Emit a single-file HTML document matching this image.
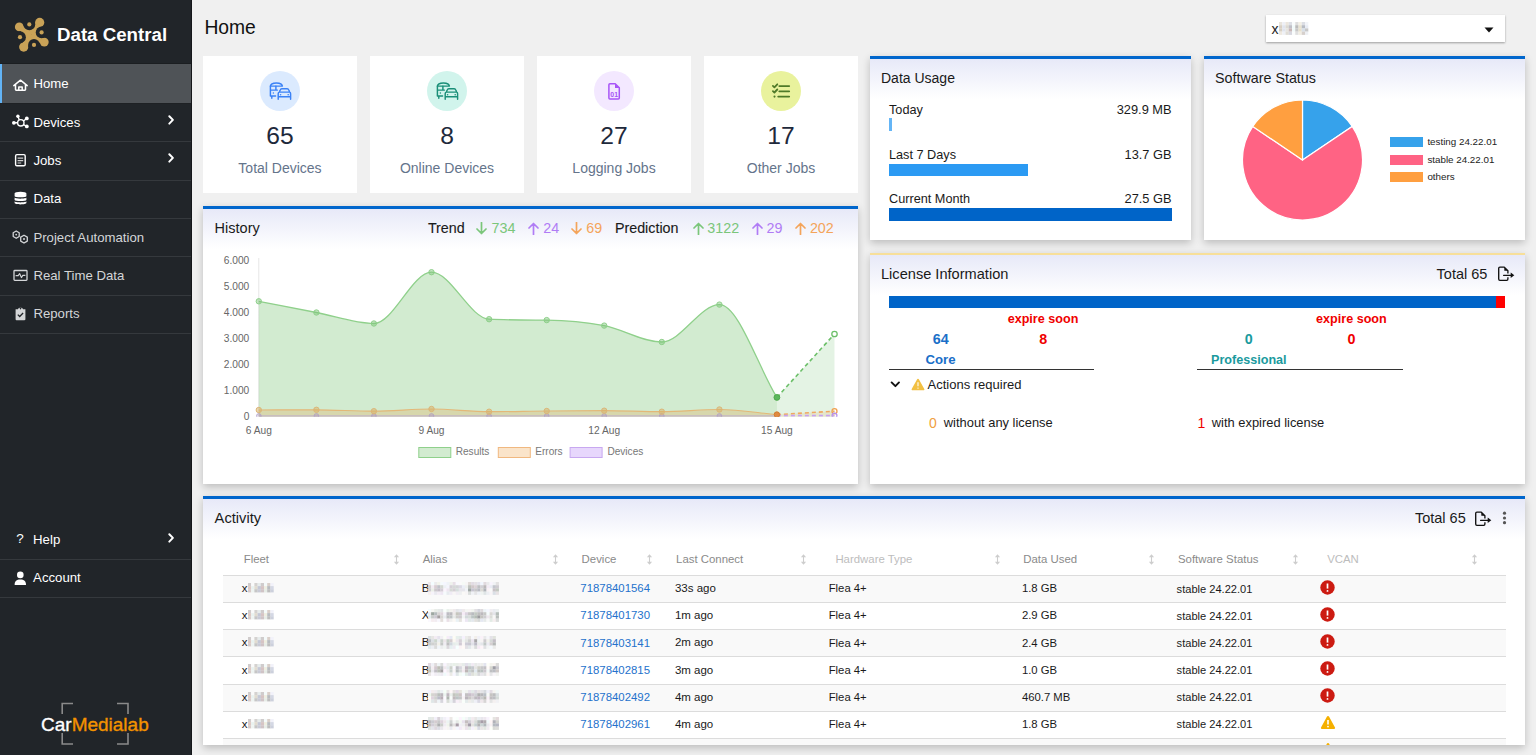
<!DOCTYPE html><html><head><meta charset="utf-8"><title>Data Central</title><style>
*{box-sizing:border-box;margin:0;padding:0}
html,body{width:1536px;height:755px;overflow:hidden}
body{background:#f0f0f0;font-family:"Liberation Sans",sans-serif;position:relative;color:#212121}
.a{position:absolute;white-space:nowrap}
#sb{position:absolute;left:0;top:0;width:192px;height:755px;background:#212529;border-right:1px solid #15171a}
.it{position:absolute;left:0;width:191px;height:38.4px;border-bottom:1px solid #34383c;color:#fff;font-size:14px}
.it .t{position:absolute;left:33px;top:11px}
.it svg{position:absolute}
.card{position:absolute;background:#fff;box-shadow:0 3px 8px rgba(0,0,0,.22)}
.card .hd{position:absolute;left:0;right:0;top:0;height:42px;background:linear-gradient(#e7e9f8,#fff)}
.card .bt{position:absolute;left:0;right:0;top:0;height:3px;background:#0066cc}
.stat{position:absolute;top:56px;width:154px;height:137px;background:#fff}
.stat .c{position:absolute;left:57px;top:15px;width:40px;height:40px;border-radius:50%}
.stat .n{position:absolute;left:0;width:154px;text-align:center;top:126px;font-size:24px;color:#1e293b;line-height:1}
.stat .l{position:absolute;left:0;width:154px;text-align:center;top:161px;font-size:14px;color:#64748b;line-height:1}
</style></head><body>
<div id="sb"></div>
<svg class="a" style="left:12px;top:16px" width="40" height="40" viewBox="12 16 40 40"><defs><mask id="lm"><rect x="0" y="0" width="60" height="60" fill="#fff"/><circle cx="29.3" cy="24.4" r="5.9" fill="#000"/><circle cx="41.6" cy="32.4" r="5.9" fill="#000"/><circle cx="20.0" cy="37.2" r="5.9" fill="#000"/><circle cx="34.0" cy="44.9" r="5.9" fill="#000"/></mask></defs><g fill="#c9a257"><g mask="url(#lm)"><path d="M34.86 29.00 L20.36 25.21 L18.24 28.59 L27.94 40.00 Z"/><circle cx="19.3" cy="26.9" r="4.4"/><path d="M36.76 38.18 L41.35 23.53 L38.05 21.27 L26.04 30.82 Z"/><circle cx="39.7" cy="22.4" r="4.6"/><path d="M25.85 31.11 L21.99 46.06 L25.41 48.14 L36.95 37.89 Z"/><circle cx="23.7" cy="47.1" r="4.6"/><path d="M28.10 40.10 L43.28 43.82 L45.32 40.38 L34.70 28.90 Z"/><circle cx="44.3" cy="42.1" r="4.4"/></g><circle cx="29.3" cy="24.4" r="2.1"/><circle cx="41.6" cy="32.4" r="2.1"/><circle cx="20.0" cy="37.2" r="2.1"/><circle cx="34.0" cy="44.9" r="2.1"/></g></svg>
<div class="a" style="top:25.87px;font-size:18.7px;line-height:18.7px;color:#fff;font-weight:bold;left:57.00px;">Data Central</div>
<div class="a" style="left:0;top:63px;width:191px;height:1px;background:#1b1e21"></div>
<div class="a" style="left:0;top:64px;width:191px;height:38.5px;background:#4f5357"></div>
<div class="a" style="left:0;top:103.10px;width:191px;height:1px;background:#1e2124"></div>
<div class="a" style="top:77.23px;font-size:13.2px;line-height:13.2px;color:#fff;left:33.40px;">Home</div>
<div class="a" style="left:0;top:141.42px;width:191px;height:1px;background:#35393d"></div>
<div class="a" style="top:115.55px;font-size:13.2px;line-height:13.2px;color:#fff;left:33.40px;">Devices</div>
<div class="a" style="left:0;top:179.74px;width:191px;height:1px;background:#35393d"></div>
<div class="a" style="top:153.87px;font-size:13.2px;line-height:13.2px;color:#fff;left:33.40px;">Jobs</div>
<div class="a" style="left:0;top:218.06px;width:191px;height:1px;background:#35393d"></div>
<div class="a" style="top:192.19px;font-size:13.2px;line-height:13.2px;color:#fff;left:33.40px;">Data</div>
<div class="a" style="left:0;top:256.38px;width:191px;height:1px;background:#35393d"></div>
<div class="a" style="top:230.51px;font-size:13.2px;line-height:13.2px;color:#d4d6d8;left:33.40px;">Project Automation</div>
<div class="a" style="left:0;top:294.70px;width:191px;height:1px;background:#35393d"></div>
<div class="a" style="top:268.83px;font-size:13.2px;line-height:13.2px;color:#d4d6d8;left:33.40px;">Real Time Data</div>
<div class="a" style="left:0;top:333.02px;width:191px;height:1px;background:#35393d"></div>
<div class="a" style="top:307.15px;font-size:13.2px;line-height:13.2px;color:#d4d6d8;left:33.40px;">Reports</div>
<div class="a" style="left:0;top:64px;width:2.4px;height:38.5px;background:#62b3f5"></div>
<svg class="a" style="left:166px;top:113.5px" width="10" height="12" viewBox="0 0 10 12"><path d="M3.3 2.2 L6.9 5.9 L3.3 9.6" stroke="#fff" stroke-width="2" fill="none" stroke-linecap="round" stroke-linejoin="round"/></svg>
<svg class="a" style="left:166px;top:152px" width="10" height="12" viewBox="0 0 10 12"><path d="M3.3 2.2 L6.9 5.9 L3.3 9.6" stroke="#fff" stroke-width="2" fill="none" stroke-linecap="round" stroke-linejoin="round"/></svg>
<svg class="a" style="left:166px;top:531.5px" width="10" height="12" viewBox="0 0 10 12"><path d="M3.3 2.2 L6.9 5.9 L3.3 9.6" stroke="#fff" stroke-width="2" fill="none" stroke-linecap="round" stroke-linejoin="round"/></svg>
<div class="a" style="left:0;top:558.8px;width:191px;height:1px;background:#35393d"></div>
<div class="a" style="left:0;top:596.9px;width:191px;height:1px;background:#35393d"></div>
<div class="a" style="top:532.37px;font-size:13.5px;line-height:13.5px;color:#fff;left:16.30px;">?</div>
<div class="a" style="top:532.83px;font-size:13.2px;line-height:13.2px;color:#fff;left:33.10px;">Help</div>
<div class="a" style="top:571.33px;font-size:13.2px;line-height:13.2px;color:#fff;left:33.10px;">Account</div>
<svg class="a" style="left:0;top:0" width="40" height="340" viewBox="0 0 40 340">
<path d="M13.8 85.6 L20.5 80.2 L27.2 85.6 M15.5 84.4 V89.6 C15.5 90 15.8 90.3 16.2 90.3 H24.8 C25.2 90.3 25.5 90 25.5 89.6 V84.4 M18.8 90.3 V87 H22.2 V90.3" stroke="#fff" stroke-width="1.5" fill="none" stroke-linejoin="round" stroke-linecap="round"/>
<g stroke="#fff" stroke-width="1.4" fill="none"><circle cx="20.8" cy="122.8" r="3.2"/><path d="M13.8 122.8 H17.6 M17.9 116.2 L19.3 120 M26.9 118.3 L23.5 121 M26.9 126.5 L23.5 124.6"/></g>
<g fill="#fff"><circle cx="13.9" cy="122.8" r="1.9"/><circle cx="17.9" cy="116.3" r="1.7"/><circle cx="26.8" cy="118.4" r="1.9"/><circle cx="26.8" cy="126.4" r="1.9"/></g>
<rect x="15.6" y="154.6" width="9.6" height="11.2" rx="1.3" stroke="#fff" stroke-width="1.4" fill="none"/>
<path d="M17.6 158.2 H23.2 M17.6 160.6 H23.2 M17.6 163 H21.2" stroke="#cfcfcf" stroke-width="1.2"/>
<g fill="#fff"><ellipse cx="20.5" cy="193.6" rx="5.9" ry="1.9"/><path d="M14.6 193.6 V196.3 C14.6 197.6 26.4 197.6 26.4 196.3 V193.6 C26.4 195 14.6 195 14.6 193.6Z"/><path d="M14.6 197.6 V200 C14.6 201.3 26.4 201.3 26.4 200 V197.6 C26.4 199 14.6 199 14.6 197.6Z"/><path d="M14.6 201.3 V203.1 C14.6 204.9 26.4 204.9 26.4 203.1 V201.3 C26.4 202.8 14.6 202.8 14.6 201.3Z"/></g>
<g stroke="#d4d6d8" stroke-width="1.3" fill="none" stroke-linejoin="round"><path d="M16.2 231 L19.2 232.8 V236.5 L16.2 238.3 L13.2 236.5 V232.8Z"/><path d="M24 235.2 L27.3 237.1 V241.1 L24 243 L20.7 241.1 V237.1Z"/></g>
<g fill="#d4d6d8"><circle cx="16.2" cy="234.6" r="0.9"/><circle cx="24" cy="239.1" r="1"/></g>
<rect x="14" y="270.5" width="13" height="9.8" rx="0.8" stroke="#d4d6d8" stroke-width="1.3" fill="none"/>
<path d="M15.6 275.6 H18.2 L19.6 273.6 L21.4 277.6 L22.8 275.4 H25.4" stroke="#d4d6d8" stroke-width="1.1" fill="none" stroke-linejoin="round"/>
<path d="M15.6 309.2 H18 C18 307.2 23 307.2 23 309.2 H25.4 V319.3 C25.4 319.8 25 320.2 24.5 320.2 H16.5 C16 320.2 15.6 319.8 15.6 319.3Z" fill="#d4d6d8"/>
<circle cx="20.5" cy="308.6" r="0.8" fill="#212529"/>
<path d="M17.8 314.6 L19.7 316.5 L23.1 313" stroke="#212529" stroke-width="1.3" fill="none"/>
</svg>
<svg class="a" style="left:14px;top:571px" width="13" height="15" viewBox="0 0 13 15"><circle cx="6.3" cy="3.9" r="3.3" fill="#fff"/><path d="M0.6 14 C0.6 10.3 2.6 8.6 6.3 8.6 C10 8.6 12 10.3 12 14Z" fill="#fff"/></svg>
<svg class="a" style="left:60px;top:702px" width="72" height="44" viewBox="0 0 72 44"><g stroke="#8a8a8a" stroke-width="1.6" fill="none"><path d="M2.2 12 V1.5 H13 M57 1.5 H68 V12 M2.2 31 V42 H13 M57 42 H68 V31"/></g></svg>
<div class="a" style="top:715.32px;font-size:19px;line-height:19px;color:#fff;left:41.00px;"><span style="color:#fff;-webkit-text-stroke:0.35px #fff">Car</span><span style="color:#f39200;-webkit-text-stroke:0.35px #f39200">Medialab</span></div>
<div class="a" style="top:18.26px;font-size:19.3px;line-height:19.3px;color:#111;left:204.40px;">Home</div>
<div class="a" style="left:1265.5px;top:15px;width:239.5px;height:27px;background:#fff;box-shadow:0 1px 2px rgba(0,0,0,.35)"></div>
<div class="a" style="top:21.65px;font-size:14px;line-height:14px;color:#222;left:1271.50px;">x</div>
<svg class="a" style="left:1278.8px;top:22.3px" width="30" height="13"><rect x="0.00" y="0.0" width="3.3" height="3.3" fill="#e8e4dc"/><rect x="0.00" y="3.2" width="3.3" height="3.3" fill="#d9d0c4"/><rect x="0.00" y="6.4" width="3.3" height="3.3" fill="#d8d0c2"/><rect x="0.00" y="9.6" width="3.3" height="3.3" fill="#efe9e0"/><rect x="3.25" y="0.0" width="3.3" height="3.3" fill="#eef0f6"/><rect x="3.25" y="3.2" width="3.3" height="3.3" fill="#e0e4ee"/><rect x="3.25" y="6.4" width="3.3" height="3.3" fill="#dfe4ee"/><rect x="3.25" y="9.6" width="3.3" height="3.3" fill="#eff1f6"/><rect x="6.50" y="0.0" width="3.3" height="3.3" fill="#ebe6de"/><rect x="6.50" y="3.2" width="3.3" height="3.3" fill="#dcd9d2"/><rect x="6.50" y="6.4" width="3.3" height="3.3" fill="#e6e4e0"/><rect x="6.50" y="9.6" width="3.3" height="3.3" fill="#e0ddd6"/><rect x="9.75" y="0.0" width="3.3" height="3.3" fill="#dde0e6"/><rect x="9.75" y="3.2" width="3.3" height="3.3" fill="#c0c0c8"/><rect x="9.75" y="6.4" width="3.3" height="3.3" fill="#cab8b8"/><rect x="9.75" y="9.6" width="3.3" height="3.3" fill="#d8d8e0"/><rect x="13.00" y="0.0" width="3.3" height="3.3" fill="#fafcfc"/><rect x="13.00" y="3.2" width="3.3" height="3.3" fill="#f2fafa"/><rect x="13.00" y="6.4" width="3.3" height="3.3" fill="#f0fafa"/><rect x="13.00" y="9.6" width="3.3" height="3.3" fill="#fafcfc"/><rect x="16.25" y="0.0" width="3.3" height="3.3" fill="#dedede"/><rect x="16.25" y="3.2" width="3.3" height="3.3" fill="#bcbcbc"/><rect x="16.25" y="6.4" width="3.3" height="3.3" fill="#c8c8c8"/><rect x="16.25" y="9.6" width="3.3" height="3.3" fill="#e0e0e0"/><rect x="19.50" y="0.0" width="3.3" height="3.3" fill="#f4f0e6"/><rect x="19.50" y="3.2" width="3.3" height="3.3" fill="#e8e2d0"/><rect x="19.50" y="6.4" width="3.3" height="3.3" fill="#e8e0cc"/><rect x="19.50" y="9.6" width="3.3" height="3.3" fill="#f2eee4"/><rect x="22.75" y="0.0" width="3.3" height="3.3" fill="#dcdee4"/><rect x="22.75" y="3.2" width="3.3" height="3.3" fill="#b8bcc4"/><rect x="22.75" y="6.4" width="3.3" height="3.3" fill="#d8e0ea"/><rect x="22.75" y="9.6" width="3.3" height="3.3" fill="#d6d0cc"/><rect x="26.00" y="0.0" width="3.3" height="3.3" fill="#f2f4f8"/><rect x="26.00" y="3.2" width="3.3" height="3.3" fill="#e8ecf4"/><rect x="26.00" y="6.4" width="3.3" height="3.3" fill="#c8c8c8"/><rect x="26.00" y="9.6" width="3.3" height="3.3" fill="#eef0f4"/></svg>
<svg class="a" style="left:1484px;top:27px" width="10" height="6" viewBox="0 0 10 6"><path d="M0.5 0.5 H9.5 L5 5.5Z" fill="#111"/></svg>
<div class="a" style="left:203px;top:56px;width:154.2px;height:137.4px;background:#fff"></div>
<div class="a" style="left:259.8px;top:71px;width:40.4px;height:40.4px;border-radius:50%;background:#dbeafe"></div>
<svg class="a" style="left:265px;top:78px" width="30" height="26" viewBox="0 0 30 26"><g stroke="#3b82f6" stroke-width="1.45" fill="none" stroke-linejoin="round" stroke-linecap="round">
<path d="M5.4 8.1 C5.6 5.9 8.2 4.9 11.4 4.9 C14.6 4.9 17.2 5.9 17.4 8.1 Z"/>
<path d="M5.4 8.1 V17.9 H10.6 M5.4 12.1 H12.4 M10.9 8.3 V12.1 M6.8 17.9 V20.2"/>
<path d="M13.2 21.3 V15.8 C13.2 14.9 13.7 14.3 14.3 14.1 L15.2 11.9 C15.5 11.1 16 10.8 16.8 10.8 H22.2 C23 10.8 23.5 11.1 23.8 11.9 L24.7 14.1 C25.3 14.3 25.6 14.9 25.6 15.8 V21.3 M13.2 18.8 H25.6 M14.3 14.1 H24.7"/></g>
<g fill="#3b82f6"><circle cx="8.4" cy="15" r="0.75"/><circle cx="15.6" cy="16.7" r="0.8"/><circle cx="23.2" cy="16.7" r="0.8"/></g></svg>
<div class="a" style="top:124.38px;font-size:24.6px;line-height:24.6px;color:#1e293b;left:130.00px;width:300px;text-align:center;">65</div>
<div class="a" style="top:160.85px;font-size:14px;line-height:14px;color:#64748b;left:130.00px;width:300px;text-align:center;">Total Devices</div>
<div class="a" style="left:370px;top:56px;width:154.2px;height:137.4px;background:#fff"></div>
<div class="a" style="left:426.8px;top:71px;width:40.4px;height:40.4px;border-radius:50%;background:#d1f4ec"></div>
<svg class="a" style="left:432px;top:78px" width="30" height="26" viewBox="0 0 30 26"><g stroke="#1a8f78" stroke-width="1.45" fill="none" stroke-linejoin="round" stroke-linecap="round">
<path d="M5.4 8.1 C5.6 5.9 8.2 4.9 11.4 4.9 C14.6 4.9 17.2 5.9 17.4 8.1 Z"/>
<path d="M5.4 8.1 V17.9 H10.6 M5.4 12.1 H12.4 M10.9 8.3 V12.1 M6.8 17.9 V20.2"/>
<path d="M13.2 21.3 V15.8 C13.2 14.9 13.7 14.3 14.3 14.1 L15.2 11.9 C15.5 11.1 16 10.8 16.8 10.8 H22.2 C23 10.8 23.5 11.1 23.8 11.9 L24.7 14.1 C25.3 14.3 25.6 14.9 25.6 15.8 V21.3 M13.2 18.8 H25.6 M14.3 14.1 H24.7"/></g>
<g fill="#1a8f78"><circle cx="8.4" cy="15" r="0.75"/><circle cx="15.6" cy="16.7" r="0.8"/><circle cx="23.2" cy="16.7" r="0.8"/></g></svg>
<div class="a" style="top:124.38px;font-size:24.6px;line-height:24.6px;color:#1e293b;left:297.00px;width:300px;text-align:center;">8</div>
<div class="a" style="top:160.85px;font-size:14px;line-height:14px;color:#64748b;left:297.00px;width:300px;text-align:center;">Online Devices</div>
<div class="a" style="left:537px;top:56px;width:154.2px;height:137.4px;background:#fff"></div>
<div class="a" style="left:593.8px;top:71px;width:40.4px;height:40.4px;border-radius:50%;background:#f3e8ff"></div>
<svg class="a" style="left:600px;top:78px" width="30" height="26" viewBox="0 0 30 26"><path d="M9.9 5.7 H15.2 L19.3 9.8 V19.9 C19.3 20.5 18.9 20.9 18.3 20.9 H9.9 C9.3 20.9 8.9 20.5 8.9 19.9 V6.7 C8.9 6.1 9.3 5.7 9.9 5.7Z" stroke="#a855f7" stroke-width="1.5" fill="none" stroke-linejoin="round"/><path d="M15 5.7 L19.3 10 H15Z" fill="#a855f7"/><text x="14.2" y="18.7" font-size="6.9" font-weight="bold" text-anchor="middle" fill="#a855f7" font-family="Liberation Sans">01</text></svg>
<div class="a" style="top:124.38px;font-size:24.6px;line-height:24.6px;color:#1e293b;left:464.00px;width:300px;text-align:center;">27</div>
<div class="a" style="top:160.85px;font-size:14px;line-height:14px;color:#64748b;left:464.00px;width:300px;text-align:center;">Logging Jobs</div>
<div class="a" style="left:704px;top:56px;width:154.2px;height:137.4px;background:#fff"></div>
<div class="a" style="left:760.8px;top:71px;width:40.4px;height:40.4px;border-radius:50%;background:#e9f29d"></div>
<svg class="a" style="left:766px;top:78px" width="30" height="26" viewBox="0 0 30 26"><g stroke="#4f7a28" stroke-width="1.8" fill="none" stroke-linecap="round" stroke-linejoin="round"><path d="M6.9 7.9 L8.4 9.3 L11.3 6.3 M6.9 13.1 L8.4 14.5 L11.3 11.5"/><path d="M13.3 8.1 H23.2 M13.3 13.3 H23.2 M12.2 18.6 H23.2"/></g><circle cx="8.5" cy="18.6" r="1.05" fill="#4f7a28"/></svg>
<div class="a" style="top:124.38px;font-size:24.6px;line-height:24.6px;color:#1e293b;left:631.00px;width:300px;text-align:center;">17</div>
<div class="a" style="top:160.85px;font-size:14px;line-height:14px;color:#64748b;left:631.00px;width:300px;text-align:center;">Other Jobs</div>
<div class="card" style="left:869.5px;top:56px;width:321.5px;height:184px"><div class="hd" style="top:3px;height:40px"></div><div class="bt" style="height:3px;background:#0066cc"></div></div>
<div class="a" style="top:70.95px;font-size:14px;line-height:14px;color:#1a1a1a;left:881.00px;">Data Usage</div>
<div class="a" style="top:103.65px;font-size:12.7px;line-height:12.7px;color:#1a1a1a;left:889.00px;">Today</div>
<div class="a" style="top:103.56px;font-size:12.8px;line-height:12.8px;color:#1a1a1a;right:364.50px;">329.9 MB</div>
<div class="a" style="left:889px;top:118.4px;width:3px;height:12.6px;background:#64b5f6"></div>
<div class="a" style="top:148.65px;font-size:12.7px;line-height:12.7px;color:#1a1a1a;left:889.00px;">Last 7 Days</div>
<div class="a" style="top:148.56px;font-size:12.8px;line-height:12.8px;color:#1a1a1a;right:364.50px;">13.7 GB</div>
<div class="a" style="left:889px;top:163.5px;width:138.5px;height:12.6px;background:#2b9af3"></div>
<div class="a" style="top:193.05px;font-size:12.7px;line-height:12.7px;color:#1a1a1a;left:889.00px;">Current Month</div>
<div class="a" style="top:192.96px;font-size:12.8px;line-height:12.8px;color:#1a1a1a;right:364.50px;">27.5 GB</div>
<div class="a" style="left:889px;top:208.4px;width:282.6px;height:12.6px;background:#0064c8"></div>
<div class="card" style="left:1203.5px;top:56px;width:321.5px;height:184px"><div class="hd" style="top:3px;height:40px"></div><div class="bt" style="height:3px;background:#0066cc"></div></div>
<div class="a" style="top:71.00px;font-size:14.3px;line-height:14.3px;color:#1a1a1a;left:1215.00px;">Software Status</div>
<svg class="a" style="left:0;top:0" width="1536" height="755"><path d="M1302.5 160 L1302.50 100.00 A60 60 0 0 1 1352.24 126.45Z" fill="#36a2eb" stroke="#fff" stroke-width="1.2"/><path d="M1302.5 160 L1352.24 126.45 A60 60 0 1 1 1252.76 126.45Z" fill="#ff6384" stroke="#fff" stroke-width="1.2"/><path d="M1302.5 160 L1252.76 126.45 A60 60 0 0 1 1302.50 100.00Z" fill="#ff9f40" stroke="#fff" stroke-width="1.2"/></svg>
<div class="a" style="left:1390px;top:137.4px;width:32.5px;height:10px;background:#36a2eb"></div>
<div class="a" style="top:137.40px;font-size:9.8px;line-height:9.8px;color:#222;left:1427.40px;">testing 24.22.01</div>
<div class="a" style="left:1390px;top:154.9px;width:32.5px;height:10px;background:#ff6384"></div>
<div class="a" style="top:154.90px;font-size:9.8px;line-height:9.8px;color:#222;left:1427.40px;">stable 24.22.01</div>
<div class="a" style="left:1390px;top:172.4px;width:32.5px;height:10px;background:#ff9f40"></div>
<div class="a" style="top:172.40px;font-size:9.8px;line-height:9.8px;color:#222;left:1427.40px;">others</div>
<div class="card" style="left:203px;top:206px;width:654.5px;height:278px"><div class="hd" style="top:3px;height:40px"></div><div class="bt" style="height:3px;background:#0066cc"></div></div>
<div class="a" style="top:221.13px;font-size:14.5px;line-height:14.5px;color:#1a1a1a;left:214.60px;">History</div>
<div class="a" style="top:221.10px;font-size:14.3px;line-height:14.3px;color:#1a1a1a;left:427.90px;-webkit-text-stroke:0.12px #1a1a1a">Trend</div>
<svg class="a" style="left:476px;top:221.5px" width="11" height="13" viewBox="0 0 11 13"><path d="M5.5 0.5 V11.5 M1 7 L5.5 11.5 L10 7" stroke="#7bc67a" stroke-width="1.7" fill="none" stroke-linecap="round" stroke-linejoin="round"/></svg>
<div class="a" style="top:221.10px;font-size:14.3px;line-height:14.3px;color:#7bc67a;left:491.60px;">734</div>
<svg class="a" style="left:527.5px;top:221.5px" width="11" height="13" viewBox="0 0 11 13"><path d="M5.5 12.5 V1.5 M1 6 L5.5 1.5 L10 6" stroke="#b07cf5" stroke-width="1.7" fill="none" stroke-linecap="round" stroke-linejoin="round"/></svg>
<div class="a" style="top:221.10px;font-size:14.3px;line-height:14.3px;color:#b07cf5;left:543.20px;">24</div>
<svg class="a" style="left:571px;top:221.5px" width="11" height="13" viewBox="0 0 11 13"><path d="M5.5 0.5 V11.5 M1 7 L5.5 11.5 L10 7" stroke="#f4a45a" stroke-width="1.7" fill="none" stroke-linecap="round" stroke-linejoin="round"/></svg>
<div class="a" style="top:221.10px;font-size:14.3px;line-height:14.3px;color:#f4a45a;left:586.20px;">69</div>
<div class="a" style="top:221.10px;font-size:14.3px;line-height:14.3px;color:#1a1a1a;left:614.90px;-webkit-text-stroke:0.12px #1a1a1a">Prediction</div>
<svg class="a" style="left:692.5px;top:221.5px" width="11" height="13" viewBox="0 0 11 13"><path d="M5.5 12.5 V1.5 M1 6 L5.5 1.5 L10 6" stroke="#7bc67a" stroke-width="1.7" fill="none" stroke-linecap="round" stroke-linejoin="round"/></svg>
<div class="a" style="top:221.10px;font-size:14.3px;line-height:14.3px;color:#7bc67a;left:707.30px;">3122</div>
<svg class="a" style="left:751.8px;top:221.5px" width="11" height="13" viewBox="0 0 11 13"><path d="M5.5 12.5 V1.5 M1 6 L5.5 1.5 L10 6" stroke="#b07cf5" stroke-width="1.7" fill="none" stroke-linecap="round" stroke-linejoin="round"/></svg>
<div class="a" style="top:221.10px;font-size:14.3px;line-height:14.3px;color:#b07cf5;left:766.60px;">29</div>
<svg class="a" style="left:795.4px;top:221.5px" width="11" height="13" viewBox="0 0 11 13"><path d="M5.5 12.5 V1.5 M1 6 L5.5 1.5 L10 6" stroke="#f4a45a" stroke-width="1.7" fill="none" stroke-linecap="round" stroke-linejoin="round"/></svg>
<div class="a" style="top:221.10px;font-size:14.3px;line-height:14.3px;color:#f4a45a;left:809.90px;">202</div>
<svg class="a" style="left:0;top:0" width="1536" height="755"><defs><clipPath id="ca"><rect x="250" y="250" width="600" height="166.8"/></clipPath></defs><text x="249.3" y="419.6" font-size="10.2" fill="#666" text-anchor="end" font-family="Liberation Sans">0</text><text x="249.3" y="393.6" font-size="10.2" fill="#666" text-anchor="end" font-family="Liberation Sans">1.000</text><text x="249.3" y="367.6" font-size="10.2" fill="#666" text-anchor="end" font-family="Liberation Sans">2.000</text><text x="249.3" y="341.6" font-size="10.2" fill="#666" text-anchor="end" font-family="Liberation Sans">3.000</text><text x="249.3" y="315.6" font-size="10.2" fill="#666" text-anchor="end" font-family="Liberation Sans">4.000</text><text x="249.3" y="289.6" font-size="10.2" fill="#666" text-anchor="end" font-family="Liberation Sans">5.000</text><text x="249.3" y="263.6" font-size="10.2" fill="#666" text-anchor="end" font-family="Liberation Sans">6.000</text><line x1="258.8" y1="258" x2="258.8" y2="416" stroke="#e6e6e6" stroke-width="1"/><text x="258.8" y="434" font-size="10.2" fill="#666" text-anchor="middle" font-family="Liberation Sans">6 Aug</text><text x="431.5" y="434" font-size="10.2" fill="#666" text-anchor="middle" font-family="Liberation Sans">9 Aug</text><text x="604.2" y="434" font-size="10.2" fill="#666" text-anchor="middle" font-family="Liberation Sans">12 Aug</text><text x="776.9" y="434" font-size="10.2" fill="#666" text-anchor="middle" font-family="Liberation Sans">15 Aug</text><g clip-path="url(#ca)"><path d="M258.80 301.30 C277.99 305.03 297.18 308.80 316.37 312.50 C335.56 316.20 354.75 323.50 373.94 323.50 C393.13 323.50 412.32 272.20 431.51 272.20 C450.70 272.20 469.89 318.31 489.08 319.20 C508.27 320.09 527.46 319.98 546.65 320.10 C565.84 320.22 585.03 321.95 604.22 325.60 C623.41 329.25 642.60 342.00 661.79 342.00 C680.98 342.00 700.17 304.60 719.36 304.60 C738.55 304.60 757.74 366.47 776.93 397.40 L776.9 417 L258.8 417Z" fill="rgba(122,196,118,0.34)"/><path d="M776.9 397.4 L834.5 334.0 L834.5 417 L776.9 417Z" fill="rgba(122,196,118,0.2)"/><path d="M258.80 301.30 C277.99 305.03 297.18 308.80 316.37 312.50 C335.56 316.20 354.75 323.50 373.94 323.50 C393.13 323.50 412.32 272.20 431.51 272.20 C450.70 272.20 469.89 318.31 489.08 319.20 C508.27 320.09 527.46 319.98 546.65 320.10 C565.84 320.22 585.03 321.95 604.22 325.60 C623.41 329.25 642.60 342.00 661.79 342.00 C680.98 342.00 700.17 304.60 719.36 304.60 C738.55 304.60 757.74 366.47 776.93 397.40" fill="none" stroke="#8fd08b" stroke-width="1.3"/><path d="M776.9 397.4 L834.5 334.0" fill="none" stroke="#6cbf69" stroke-width="1.6" stroke-dasharray="4 3"/><path d="M258.80 410.00 C277.99 409.93 297.18 409.80 316.37 409.80 C335.56 409.80 354.75 411.20 373.94 411.20 C393.13 411.20 412.32 409.00 431.51 409.00 C450.70 409.00 469.89 411.70 489.08 411.70 C508.27 411.70 527.46 411.17 546.65 411.00 C565.84 410.83 585.03 410.70 604.22 410.70 C623.41 410.70 642.60 411.70 661.79 411.70 C680.98 411.70 700.17 409.50 719.36 409.50 C738.55 409.50 757.74 412.90 776.93 414.60 L776.9 417 L258.8 417Z" fill="rgba(230,170,90,0.30)"/><path d="M776.9 414.6 L834.5 411.2 L834.5 417 L776.9 417Z" fill="rgba(230,170,90,0.18)"/><path d="M258.80 410.00 C277.99 409.93 297.18 409.80 316.37 409.80 C335.56 409.80 354.75 411.20 373.94 411.20 C393.13 411.20 412.32 409.00 431.51 409.00 C450.70 409.00 469.89 411.70 489.08 411.70 C508.27 411.70 527.46 411.17 546.65 411.00 C565.84 410.83 585.03 410.70 604.22 410.70 C623.41 410.70 642.60 411.70 661.79 411.70 C680.98 411.70 700.17 409.50 719.36 409.50 C738.55 409.50 757.74 412.90 776.93 414.60" fill="none" stroke="#e3b878" stroke-width="1.2"/><path d="M776.9 414.6 L834.5 411.2" fill="none" stroke="#f0a860" stroke-width="1.6" stroke-dasharray="4 3"/><path d="M258.8 416 H776.9" stroke="#bba6d0" stroke-width="1.2"/><path d="M776.9 415.6 H834.5" stroke="#c8a0f0" stroke-width="1.6" stroke-dasharray="4 3"/><circle cx="258.8" cy="301.3" r="2.7" fill="rgba(122,196,118,0.45)" stroke="#8fd08b" stroke-width="1"/><circle cx="258.8" cy="416" r="2.4" fill="rgba(170,150,190,0.35)" stroke="rgba(170,150,200,0.6)" stroke-width="1"/><circle cx="258.8" cy="410" r="2.7" fill="rgba(215,175,100,0.5)" stroke="#dcb678" stroke-width="1"/><circle cx="316.4" cy="312.5" r="2.7" fill="rgba(122,196,118,0.45)" stroke="#8fd08b" stroke-width="1"/><circle cx="316.4" cy="416" r="2.4" fill="rgba(170,150,190,0.35)" stroke="rgba(170,150,200,0.6)" stroke-width="1"/><circle cx="316.4" cy="409.8" r="2.7" fill="rgba(215,175,100,0.5)" stroke="#dcb678" stroke-width="1"/><circle cx="373.9" cy="323.5" r="2.7" fill="rgba(122,196,118,0.45)" stroke="#8fd08b" stroke-width="1"/><circle cx="373.9" cy="416" r="2.4" fill="rgba(170,150,190,0.35)" stroke="rgba(170,150,200,0.6)" stroke-width="1"/><circle cx="373.9" cy="411.2" r="2.7" fill="rgba(215,175,100,0.5)" stroke="#dcb678" stroke-width="1"/><circle cx="431.5" cy="272.2" r="2.7" fill="rgba(122,196,118,0.45)" stroke="#8fd08b" stroke-width="1"/><circle cx="431.5" cy="416" r="2.4" fill="rgba(170,150,190,0.35)" stroke="rgba(170,150,200,0.6)" stroke-width="1"/><circle cx="431.5" cy="409" r="2.7" fill="rgba(215,175,100,0.5)" stroke="#dcb678" stroke-width="1"/><circle cx="489.1" cy="319.2" r="2.7" fill="rgba(122,196,118,0.45)" stroke="#8fd08b" stroke-width="1"/><circle cx="489.1" cy="416" r="2.4" fill="rgba(170,150,190,0.35)" stroke="rgba(170,150,200,0.6)" stroke-width="1"/><circle cx="489.1" cy="411.7" r="2.7" fill="rgba(215,175,100,0.5)" stroke="#dcb678" stroke-width="1"/><circle cx="546.7" cy="320.1" r="2.7" fill="rgba(122,196,118,0.45)" stroke="#8fd08b" stroke-width="1"/><circle cx="546.7" cy="416" r="2.4" fill="rgba(170,150,190,0.35)" stroke="rgba(170,150,200,0.6)" stroke-width="1"/><circle cx="546.7" cy="411" r="2.7" fill="rgba(215,175,100,0.5)" stroke="#dcb678" stroke-width="1"/><circle cx="604.2" cy="325.6" r="2.7" fill="rgba(122,196,118,0.45)" stroke="#8fd08b" stroke-width="1"/><circle cx="604.2" cy="416" r="2.4" fill="rgba(170,150,190,0.35)" stroke="rgba(170,150,200,0.6)" stroke-width="1"/><circle cx="604.2" cy="410.7" r="2.7" fill="rgba(215,175,100,0.5)" stroke="#dcb678" stroke-width="1"/><circle cx="661.8" cy="342.0" r="2.7" fill="rgba(122,196,118,0.45)" stroke="#8fd08b" stroke-width="1"/><circle cx="661.8" cy="416" r="2.4" fill="rgba(170,150,190,0.35)" stroke="rgba(170,150,200,0.6)" stroke-width="1"/><circle cx="661.8" cy="411.7" r="2.7" fill="rgba(215,175,100,0.5)" stroke="#dcb678" stroke-width="1"/><circle cx="719.4" cy="304.6" r="2.7" fill="rgba(122,196,118,0.45)" stroke="#8fd08b" stroke-width="1"/><circle cx="719.4" cy="416" r="2.4" fill="rgba(170,150,190,0.35)" stroke="rgba(170,150,200,0.6)" stroke-width="1"/><circle cx="719.4" cy="409.5" r="2.7" fill="rgba(215,175,100,0.5)" stroke="#dcb678" stroke-width="1"/><circle cx="776.9" cy="416" r="2.4" fill="rgba(170,150,190,0.35)" stroke="rgba(170,150,200,0.6)" stroke-width="1"/><circle cx="776.9" cy="414.6" r="2.7" fill="rgba(215,175,100,0.5)" stroke="#dcb678" stroke-width="1"/><circle cx="834.5" cy="334.0" r="2.7" fill="#fff" stroke="#6cbf69" stroke-width="1.3"/><circle cx="834.5" cy="411.2" r="2.5" fill="none" stroke="#f0a050" stroke-width="1.3"/><circle cx="834.5" cy="415.5" r="2.4" fill="none" stroke="#b690f0" stroke-width="1.3"/><circle cx="776.9" cy="397.4" r="2.9" fill="#5cb85c" stroke="#4fa84c" stroke-width="1"/><circle cx="776.9" cy="414.6" r="2.7" fill="#e08a40" stroke="#d27a30" stroke-width="1"/></g><rect x="418.8" y="447.5" width="32" height="10" fill="rgba(122,196,118,0.34)" stroke="#8fd08b" stroke-width="1"/><text x="455.7" y="455.3" font-size="10.1" fill="#777" font-family="Liberation Sans">Results</text><rect x="498.3" y="447.5" width="32" height="10" fill="rgba(240,170,90,0.32)" stroke="#f0b880" stroke-width="1"/><text x="535.2" y="455.3" font-size="10.1" fill="#777" font-family="Liberation Sans">Errors</text><rect x="570.1" y="447.5" width="32" height="10" fill="rgba(176,124,245,0.3)" stroke="#c8a8f0" stroke-width="1"/><text x="607.4" y="455.3" font-size="10.1" fill="#777" font-family="Liberation Sans">Devices</text></svg>
<div class="card" style="left:869.5px;top:253.3px;width:655.5px;height:231px"><div class="hd" style="top:2px;height:40px"></div><div class="bt" style="height:2px;background:#f7df9a"></div></div>
<div class="a" style="top:267.04px;font-size:14.6px;line-height:14.6px;color:#1a1a1a;left:881.00px;">License Information</div>
<div class="a" style="top:267.13px;font-size:14.5px;line-height:14.5px;color:#1a1a1a;right:48.60px;">Total 65</div>
<svg class="a" style="left:1492px;top:262px" width="28" height="24" viewBox="0 0 28 24"><path d="M15.9 11.6 V8.8 L12.3 5.1 H7.9 C7.2 5.1 6.7 5.6 6.7 6.3 V17.1 C6.7 17.8 7.2 18.3 7.9 18.3 H14.7 C15.4 18.3 15.9 17.8 15.9 17.1 V15.2" stroke="#111" stroke-width="1.35" fill="none" stroke-linejoin="round"/><path d="M12.3 5.3 V8.8 H15.8Z" fill="#111"/><path d="M11.6 13.35 H19.4" stroke="#111" stroke-width="1.35" stroke-linecap="round"/><path d="M18.7 10.6 L22.3 13.35 L18.7 16.1Z" fill="#111"/></svg>
<div class="a" style="left:888.8px;top:296.2px;width:607px;height:12.3px;background:#0064c8"></div>
<div class="a" style="left:1495.7px;top:296.2px;width:9.8px;height:12.3px;background:#ff0000"></div>
<div class="a" style="top:312.63px;font-size:12.6px;line-height:12.6px;color:#f00000;font-weight:bold;left:893.00px;width:300px;text-align:center;">expire soon</div>
<div class="a" style="top:312.63px;font-size:12.6px;line-height:12.6px;color:#f00000;font-weight:bold;left:1201.40px;width:300px;text-align:center;">expire soon</div>
<div class="a" style="top:332.40px;font-size:14.3px;line-height:14.3px;color:#1a6fc8;font-weight:bold;left:790.80px;width:300px;text-align:center;">64</div>
<div class="a" style="top:332.40px;font-size:14.3px;line-height:14.3px;color:#f00000;font-weight:bold;left:893.20px;width:300px;text-align:center;">8</div>
<div class="a" style="top:353.13px;font-size:13.2px;line-height:13.2px;color:#1a6fc8;font-weight:bold;left:790.50px;width:300px;text-align:center;">Core</div>
<div class="a" style="top:332.40px;font-size:14.3px;line-height:14.3px;color:#1a9a9e;font-weight:bold;left:1098.80px;width:300px;text-align:center;">0</div>
<div class="a" style="top:332.40px;font-size:14.3px;line-height:14.3px;color:#f00000;font-weight:bold;left:1201.50px;width:300px;text-align:center;">0</div>
<div class="a" style="top:353.63px;font-size:12.6px;line-height:12.6px;color:#1a9a9e;font-weight:bold;left:1098.80px;width:300px;text-align:center;">Professional</div>
<div class="a" style="left:888.8px;top:368.6px;width:205.6px;height:1.2px;background:#333"></div>
<div class="a" style="left:1197.3px;top:368.6px;width:205.7px;height:1.2px;background:#333"></div>
<svg class="a" style="left:890px;top:380px" width="11" height="8" viewBox="0 0 11 8"><path d="M1.6 2.4 L5.4 6.2 L9 2.4" stroke="#111" stroke-width="1.9" fill="none" stroke-linecap="round" stroke-linejoin="round"/></svg>
<svg class="a" style="left:910.5px;top:377.5px" width="14" height="13" viewBox="0 0 14 13"><path d="M7 0.8 C7.5 0.8 7.8 1 8 1.4 L13.3 11 C13.6 11.7 13.2 12.3 12.5 12.3 H1.5 C0.8 12.3 0.4 11.7 0.7 11 L6 1.4 C6.2 1 6.5 0.8 7 0.8Z" fill="#f2c043"/><path d="M7 4.2 V8.3" stroke="#fff" stroke-width="1.1"/><circle cx="7" cy="10.1" r="0.7" fill="#fff"/></svg>
<div class="a" style="top:378.10px;font-size:13px;line-height:13px;color:#1a1a1a;left:927.50px;">Actions required</div>
<div class="a" style="top:416.15px;font-size:14px;line-height:14px;color:#f0a040;left:929.00px;">0</div>
<div class="a" style="top:417.08px;font-size:12.9px;line-height:12.9px;color:#1a1a1a;left:943.80px;">without any license</div>
<div class="a" style="top:416.15px;font-size:14px;line-height:14px;color:#f00000;left:1197.60px;">1</div>
<div class="a" style="top:417.08px;font-size:12.9px;line-height:12.9px;color:#1a1a1a;left:1211.80px;">with expired license</div>
<div class="card" style="left:203px;top:496px;width:1322px;height:249px"><div class="hd" style="top:3px;height:40px"></div><div class="bt" style="height:3px;background:#0066cc"></div></div>
<div class="a" style="top:510.86px;font-size:14.7px;line-height:14.7px;color:#1a1a1a;left:214.60px;">Activity</div>
<div class="a" style="top:511.03px;font-size:14.5px;line-height:14.5px;color:#1a1a1a;right:70.30px;">Total 65</div>
<svg class="a" style="left:1469.2px;top:507.4px" width="28" height="24" viewBox="0 0 28 24"><path d="M15.9 11.6 V8.8 L12.3 5.1 H7.9 C7.2 5.1 6.7 5.6 6.7 6.3 V17.1 C6.7 17.8 7.2 18.3 7.9 18.3 H14.7 C15.4 18.3 15.9 17.8 15.9 17.1 V15.2" stroke="#111" stroke-width="1.35" fill="none" stroke-linejoin="round"/><path d="M12.3 5.3 V8.8 H15.8Z" fill="#111"/><path d="M11.6 13.35 H19.4" stroke="#111" stroke-width="1.35" stroke-linecap="round"/><path d="M18.7 10.6 L22.3 13.35 L18.7 16.1Z" fill="#111"/></svg>
<svg class="a" style="left:1502px;top:511px" width="5" height="14" viewBox="0 0 5 14"><circle cx="2.5" cy="2.2" r="1.6" fill="#555"/><circle cx="2.5" cy="7" r="1.6" fill="#555"/><circle cx="2.5" cy="11.7" r="1.6" fill="#555"/></svg>
<div class="a" style="top:553.65px;font-size:11.4px;line-height:11.4px;color:#8a8a8a;left:243.70px;">Fleet</div>
<svg class="a" style="left:392.8px;top:554px" width="7" height="11" viewBox="0 0 7 11"><path d="M3.5 2.5 V8.5" stroke="#cdcdcd" stroke-width="1.1"/><path d="M0.9 3.2 L3.5 0.2 L6.1 3.2Z M0.9 7.8 L3.5 10.8 L6.1 7.8Z" fill="#cdcdcd"/></svg>
<div class="a" style="top:553.65px;font-size:11.4px;line-height:11.4px;color:#8a8a8a;left:422.70px;">Alias</div>
<svg class="a" style="left:551.5px;top:554px" width="7" height="11" viewBox="0 0 7 11"><path d="M3.5 2.5 V8.5" stroke="#cdcdcd" stroke-width="1.1"/><path d="M0.9 3.2 L3.5 0.2 L6.1 3.2Z M0.9 7.8 L3.5 10.8 L6.1 7.8Z" fill="#cdcdcd"/></svg>
<div class="a" style="top:553.65px;font-size:11.4px;line-height:11.4px;color:#8a8a8a;left:581.60px;">Device</div>
<svg class="a" style="left:645.5px;top:554px" width="7" height="11" viewBox="0 0 7 11"><path d="M3.5 2.5 V8.5" stroke="#cdcdcd" stroke-width="1.1"/><path d="M0.9 3.2 L3.5 0.2 L6.1 3.2Z M0.9 7.8 L3.5 10.8 L6.1 7.8Z" fill="#cdcdcd"/></svg>
<div class="a" style="top:553.65px;font-size:11.4px;line-height:11.4px;color:#8a8a8a;left:676.10px;">Last Connect</div>
<svg class="a" style="left:800.3px;top:554px" width="7" height="11" viewBox="0 0 7 11"><path d="M3.5 2.5 V8.5" stroke="#cdcdcd" stroke-width="1.1"/><path d="M0.9 3.2 L3.5 0.2 L6.1 3.2Z M0.9 7.8 L3.5 10.8 L6.1 7.8Z" fill="#cdcdcd"/></svg>
<div class="a" style="top:553.65px;font-size:11.4px;line-height:11.4px;color:#bdbdbd;left:835.40px;">Hardware Type</div>
<svg class="a" style="left:993.7px;top:554px" width="7" height="11" viewBox="0 0 7 11"><path d="M3.5 2.5 V8.5" stroke="#cdcdcd" stroke-width="1.1"/><path d="M0.9 3.2 L3.5 0.2 L6.1 3.2Z M0.9 7.8 L3.5 10.8 L6.1 7.8Z" fill="#cdcdcd"/></svg>
<div class="a" style="top:553.65px;font-size:11.4px;line-height:11.4px;color:#8a8a8a;left:1023.30px;">Data Used</div>
<svg class="a" style="left:1147.5px;top:554px" width="7" height="11" viewBox="0 0 7 11"><path d="M3.5 2.5 V8.5" stroke="#cdcdcd" stroke-width="1.1"/><path d="M0.9 3.2 L3.5 0.2 L6.1 3.2Z M0.9 7.8 L3.5 10.8 L6.1 7.8Z" fill="#cdcdcd"/></svg>
<div class="a" style="top:553.65px;font-size:11.4px;line-height:11.4px;color:#8a8a8a;left:1178.00px;">Software Status</div>
<svg class="a" style="left:1292.0px;top:554px" width="7" height="11" viewBox="0 0 7 11"><path d="M3.5 2.5 V8.5" stroke="#cdcdcd" stroke-width="1.1"/><path d="M0.9 3.2 L3.5 0.2 L6.1 3.2Z M0.9 7.8 L3.5 10.8 L6.1 7.8Z" fill="#cdcdcd"/></svg>
<div class="a" style="top:553.65px;font-size:11.4px;line-height:11.4px;color:#bdbdbd;left:1327.20px;">VCAN</div>
<svg class="a" style="left:1470.5px;top:554px" width="7" height="11" viewBox="0 0 7 11"><path d="M3.5 2.5 V8.5" stroke="#cdcdcd" stroke-width="1.1"/><path d="M0.9 3.2 L3.5 0.2 L6.1 3.2Z M0.9 7.8 L3.5 10.8 L6.1 7.8Z" fill="#cdcdcd"/></svg>
<div class="a" style="left:222.8px;top:575px;width:1282.8px;height:170px;overflow:hidden">
<div class="a" style="left:0;top:0.0px;width:1282.8px;height:27.15px;background:#f9f9f9;border-top:1px solid #dcdcdc"></div>
<div class="a" style="left:19.0px;top:8.17px;font-size:11.5px;line-height:11.5px;color:#1a1a1a">x</div>
<svg class="a" style="left:25.4px;top:7.9px" width="26" height="10"><rect x="0.0" y="0.0" width="3.3" height="3.2" fill="#d0cccc"/><rect x="0.0" y="3.1" width="3.3" height="3.2" fill="#dfc9c3"/><rect x="0.0" y="6.2" width="3.3" height="3.2" fill="#d9cbc8"/><rect x="3.2" y="0.0" width="3.3" height="3.2" fill="#fafafa"/><rect x="3.2" y="3.1" width="3.3" height="3.2" fill="#e8f2f0"/><rect x="3.2" y="6.2" width="3.3" height="3.2" fill="#eef4f2"/><rect x="6.4" y="0.0" width="3.3" height="3.2" fill="#d4d2d0"/><rect x="6.4" y="3.1" width="3.3" height="3.2" fill="#e2dcd0"/><rect x="6.4" y="6.2" width="3.3" height="3.2" fill="#c6c6c6"/><rect x="9.6" y="0.0" width="3.3" height="3.2" fill="#e6ecec"/><rect x="9.6" y="3.1" width="3.3" height="3.2" fill="#c4c8d6"/><rect x="9.6" y="6.2" width="3.3" height="3.2" fill="#c8cad6"/><rect x="12.8" y="0.0" width="3.3" height="3.2" fill="#d0cccc"/><rect x="12.8" y="3.1" width="3.3" height="3.2" fill="#d6c4c4"/><rect x="12.8" y="6.2" width="3.3" height="3.2" fill="#d0c4c6"/><rect x="16.0" y="0.0" width="3.3" height="3.2" fill="#f4fafa"/><rect x="16.0" y="3.1" width="3.3" height="3.2" fill="#eeeee0"/><rect x="16.0" y="6.2" width="3.3" height="3.2" fill="#e6ece6"/><rect x="19.2" y="0.0" width="3.3" height="3.2" fill="#dad0ca"/><rect x="19.2" y="3.1" width="3.3" height="3.2" fill="#b8bcc0"/><rect x="19.2" y="6.2" width="3.3" height="3.2" fill="#bebebe"/><rect x="22.4" y="0.0" width="3.3" height="3.2" fill="#f2f2fa"/><rect x="22.4" y="3.1" width="3.3" height="3.2" fill="#d4d8e4"/><rect x="22.4" y="6.2" width="3.3" height="3.2" fill="#ccd0dc"/></svg>
<div class="a" style="left:199.0px;top:8.17px;font-size:11.5px;line-height:11.5px;color:#1a1a1a">B</div>
<svg class="a" style="left:205.7px;top:6.6px" width="71" height="13"><rect x="0.00" y="0.0" width="3.2" height="3.3" fill="rgb(238,232,236)"/><rect x="0.00" y="3.2" width="3.2" height="3.3" fill="rgb(207,208,206)"/><rect x="0.00" y="6.4" width="3.2" height="3.3" fill="rgb(205,203,211)"/><rect x="0.00" y="9.6" width="3.2" height="3.3" fill="rgb(247,240,238)"/><rect x="3.08" y="0.0" width="3.2" height="3.3" fill="rgb(244,253,255)"/><rect x="3.08" y="3.2" width="3.2" height="3.3" fill="rgb(243,236,243)"/><rect x="3.08" y="6.4" width="3.2" height="3.3" fill="rgb(235,239,231)"/><rect x="3.08" y="9.6" width="3.2" height="3.3" fill="rgb(246,243,250)"/><rect x="6.16" y="0.0" width="3.2" height="3.3" fill="rgb(236,235,236)"/><rect x="6.16" y="3.2" width="3.2" height="3.3" fill="rgb(216,205,210)"/><rect x="6.16" y="6.4" width="3.2" height="3.3" fill="rgb(204,200,204)"/><rect x="6.16" y="9.6" width="3.2" height="3.3" fill="rgb(233,233,239)"/><rect x="9.24" y="0.0" width="3.2" height="3.3" fill="rgb(242,244,235)"/><rect x="9.24" y="3.2" width="3.2" height="3.3" fill="rgb(193,195,202)"/><rect x="9.24" y="6.4" width="3.2" height="3.3" fill="rgb(197,190,200)"/><rect x="9.24" y="9.6" width="3.2" height="3.3" fill="rgb(243,237,245)"/><rect x="12.32" y="0.0" width="3.2" height="3.3" fill="rgb(245,250,253)"/><rect x="12.32" y="3.2" width="3.2" height="3.3" fill="rgb(212,215,210)"/><rect x="12.32" y="6.4" width="3.2" height="3.3" fill="rgb(212,206,214)"/><rect x="12.32" y="9.6" width="3.2" height="3.3" fill="rgb(238,231,243)"/><rect x="15.40" y="0.0" width="3.2" height="3.3" fill="rgb(245,246,256)"/><rect x="15.40" y="3.2" width="3.2" height="3.3" fill="rgb(237,241,245)"/><rect x="15.40" y="6.4" width="3.2" height="3.3" fill="rgb(251,244,253)"/><rect x="15.40" y="9.6" width="3.2" height="3.3" fill="rgb(246,250,252)"/><rect x="18.48" y="0.0" width="3.2" height="3.3" fill="rgb(239,243,248)"/><rect x="18.48" y="3.2" width="3.2" height="3.3" fill="rgb(244,244,253)"/><rect x="18.48" y="6.4" width="3.2" height="3.3" fill="rgb(238,230,240)"/><rect x="18.48" y="9.6" width="3.2" height="3.3" fill="rgb(231,235,239)"/><rect x="21.56" y="0.0" width="3.2" height="3.3" fill="rgb(239,242,237)"/><rect x="21.56" y="3.2" width="3.2" height="3.3" fill="rgb(213,208,215)"/><rect x="21.56" y="6.4" width="3.2" height="3.3" fill="rgb(214,217,214)"/><rect x="21.56" y="9.6" width="3.2" height="3.3" fill="rgb(240,236,245)"/><rect x="24.64" y="0.0" width="3.2" height="3.3" fill="rgb(232,223,231)"/><rect x="24.64" y="3.2" width="3.2" height="3.3" fill="rgb(213,217,215)"/><rect x="24.64" y="6.4" width="3.2" height="3.3" fill="rgb(213,207,213)"/><rect x="24.64" y="9.6" width="3.2" height="3.3" fill="rgb(248,246,246)"/><rect x="27.72" y="0.0" width="3.2" height="3.3" fill="rgb(249,249,254)"/><rect x="27.72" y="3.2" width="3.2" height="3.3" fill="rgb(213,213,216)"/><rect x="27.72" y="6.4" width="3.2" height="3.3" fill="rgb(214,223,221)"/><rect x="27.72" y="9.6" width="3.2" height="3.3" fill="rgb(241,237,244)"/><rect x="30.80" y="0.0" width="3.2" height="3.3" fill="rgb(251,250,250)"/><rect x="30.80" y="3.2" width="3.2" height="3.3" fill="rgb(219,218,228)"/><rect x="30.80" y="6.4" width="3.2" height="3.3" fill="rgb(231,229,235)"/><rect x="30.80" y="9.6" width="3.2" height="3.3" fill="rgb(238,240,241)"/><rect x="33.88" y="0.0" width="3.2" height="3.3" fill="rgb(246,250,246)"/><rect x="33.88" y="3.2" width="3.2" height="3.3" fill="rgb(235,238,246)"/><rect x="33.88" y="6.4" width="3.2" height="3.3" fill="rgb(229,229,236)"/><rect x="33.88" y="9.6" width="3.2" height="3.3" fill="rgb(250,249,247)"/><rect x="36.96" y="0.0" width="3.2" height="3.3" fill="rgb(247,245,245)"/><rect x="36.96" y="3.2" width="3.2" height="3.3" fill="rgb(237,239,237)"/><rect x="36.96" y="6.4" width="3.2" height="3.3" fill="rgb(241,243,247)"/><rect x="36.96" y="9.6" width="3.2" height="3.3" fill="rgb(247,245,246)"/><rect x="40.04" y="0.0" width="3.2" height="3.3" fill="rgb(224,218,215)"/><rect x="40.04" y="3.2" width="3.2" height="3.3" fill="rgb(190,193,188)"/><rect x="40.04" y="6.4" width="3.2" height="3.3" fill="rgb(159,167,164)"/><rect x="40.04" y="9.6" width="3.2" height="3.3" fill="rgb(219,222,221)"/><rect x="43.12" y="0.0" width="3.2" height="3.3" fill="rgb(226,220,228)"/><rect x="43.12" y="3.2" width="3.2" height="3.3" fill="rgb(209,200,202)"/><rect x="43.12" y="6.4" width="3.2" height="3.3" fill="rgb(199,197,209)"/><rect x="43.12" y="9.6" width="3.2" height="3.3" fill="rgb(240,242,246)"/><rect x="46.20" y="0.0" width="3.2" height="3.3" fill="rgb(229,226,230)"/><rect x="46.20" y="3.2" width="3.2" height="3.3" fill="rgb(219,209,214)"/><rect x="46.20" y="6.4" width="3.2" height="3.3" fill="rgb(200,199,202)"/><rect x="46.20" y="9.6" width="3.2" height="3.3" fill="rgb(229,229,231)"/><rect x="49.28" y="0.0" width="3.2" height="3.3" fill="rgb(228,227,237)"/><rect x="49.28" y="3.2" width="3.2" height="3.3" fill="rgb(190,191,194)"/><rect x="49.28" y="6.4" width="3.2" height="3.3" fill="rgb(185,187,195)"/><rect x="49.28" y="9.6" width="3.2" height="3.3" fill="rgb(239,242,247)"/><rect x="52.36" y="0.0" width="3.2" height="3.3" fill="rgb(241,246,253)"/><rect x="52.36" y="3.2" width="3.2" height="3.3" fill="rgb(210,209,213)"/><rect x="52.36" y="6.4" width="3.2" height="3.3" fill="rgb(219,218,213)"/><rect x="52.36" y="9.6" width="3.2" height="3.3" fill="rgb(239,243,241)"/><rect x="55.44" y="0.0" width="3.2" height="3.3" fill="rgb(225,218,222)"/><rect x="55.44" y="3.2" width="3.2" height="3.3" fill="rgb(187,184,185)"/><rect x="55.44" y="6.4" width="3.2" height="3.3" fill="rgb(176,180,185)"/><rect x="55.44" y="9.6" width="3.2" height="3.3" fill="rgb(223,229,230)"/><rect x="58.52" y="0.0" width="3.2" height="3.3" fill="rgb(234,235,236)"/><rect x="58.52" y="3.2" width="3.2" height="3.3" fill="rgb(243,235,244)"/><rect x="58.52" y="6.4" width="3.2" height="3.3" fill="rgb(250,242,245)"/><rect x="58.52" y="9.6" width="3.2" height="3.3" fill="rgb(237,239,243)"/><rect x="61.60" y="0.0" width="3.2" height="3.3" fill="rgb(248,244,253)"/><rect x="61.60" y="3.2" width="3.2" height="3.3" fill="rgb(233,235,244)"/><rect x="61.60" y="6.4" width="3.2" height="3.3" fill="rgb(249,250,249)"/><rect x="61.60" y="9.6" width="3.2" height="3.3" fill="rgb(248,244,247)"/><rect x="64.68" y="0.0" width="3.2" height="3.3" fill="rgb(241,243,245)"/><rect x="64.68" y="3.2" width="3.2" height="3.3" fill="rgb(195,198,205)"/><rect x="64.68" y="6.4" width="3.2" height="3.3" fill="rgb(201,194,199)"/><rect x="64.68" y="9.6" width="3.2" height="3.3" fill="rgb(218,224,230)"/><rect x="67.76" y="0.0" width="3.2" height="3.3" fill="rgb(227,226,226)"/><rect x="67.76" y="3.2" width="3.2" height="3.3" fill="rgb(207,204,209)"/><rect x="67.76" y="6.4" width="3.2" height="3.3" fill="rgb(195,201,193)"/><rect x="67.76" y="9.6" width="3.2" height="3.3" fill="rgb(232,227,229)"/></svg>
<div class="a" style="left:357.5px;top:8.25px;font-size:11.4px;line-height:11.4px;color:#2472cc">71878401564</div>
<div class="a" style="left:452.1px;top:8.17px;font-size:11.5px;line-height:11.5px;color:#1a1a1a">33s ago</div>
<div class="a" style="left:605.9px;top:8.33px;font-size:11.3px;line-height:11.3px;color:#1a1a1a">Flea 4+</div>
<div class="a" style="left:799.1px;top:8.33px;font-size:11.3px;line-height:11.3px;color:#1a1a1a">1.8 GB</div>
<div class="a" style="left:953.8px;top:8.50px;font-size:11.1px;line-height:11.1px;color:#1a1a1a">stable 24.22.01</div>
<svg class="a" style="left:1097.3px;top:4.5px" width="15" height="15" viewBox="0 0 15 15"><circle cx="7.5" cy="7.5" r="7.2" fill="#cc1b12"/><path d="M7.5 3.5 V8.6" stroke="#fff" stroke-width="1.7"/><circle cx="7.5" cy="10.9" r="0.95" fill="#fff"/></svg>
<div class="a" style="left:0;top:27.1px;width:1282.8px;height:27.15px;background:#fff;border-top:1px solid #dcdcdc"></div>
<div class="a" style="left:19.0px;top:35.32px;font-size:11.5px;line-height:11.5px;color:#1a1a1a">x</div>
<svg class="a" style="left:25.4px;top:35.0px" width="26" height="10"><rect x="0.0" y="0.0" width="3.3" height="3.2" fill="#d0cccc"/><rect x="0.0" y="3.1" width="3.3" height="3.2" fill="#dfc9c3"/><rect x="0.0" y="6.2" width="3.3" height="3.2" fill="#d9cbc8"/><rect x="3.2" y="0.0" width="3.3" height="3.2" fill="#fafafa"/><rect x="3.2" y="3.1" width="3.3" height="3.2" fill="#e8f2f0"/><rect x="3.2" y="6.2" width="3.3" height="3.2" fill="#eef4f2"/><rect x="6.4" y="0.0" width="3.3" height="3.2" fill="#d4d2d0"/><rect x="6.4" y="3.1" width="3.3" height="3.2" fill="#e2dcd0"/><rect x="6.4" y="6.2" width="3.3" height="3.2" fill="#c6c6c6"/><rect x="9.6" y="0.0" width="3.3" height="3.2" fill="#e6ecec"/><rect x="9.6" y="3.1" width="3.3" height="3.2" fill="#c4c8d6"/><rect x="9.6" y="6.2" width="3.3" height="3.2" fill="#c8cad6"/><rect x="12.8" y="0.0" width="3.3" height="3.2" fill="#d0cccc"/><rect x="12.8" y="3.1" width="3.3" height="3.2" fill="#d6c4c4"/><rect x="12.8" y="6.2" width="3.3" height="3.2" fill="#d0c4c6"/><rect x="16.0" y="0.0" width="3.3" height="3.2" fill="#f4fafa"/><rect x="16.0" y="3.1" width="3.3" height="3.2" fill="#eeeee0"/><rect x="16.0" y="6.2" width="3.3" height="3.2" fill="#e6ece6"/><rect x="19.2" y="0.0" width="3.3" height="3.2" fill="#dad0ca"/><rect x="19.2" y="3.1" width="3.3" height="3.2" fill="#b8bcc0"/><rect x="19.2" y="6.2" width="3.3" height="3.2" fill="#bebebe"/><rect x="22.4" y="0.0" width="3.3" height="3.2" fill="#f2f2fa"/><rect x="22.4" y="3.1" width="3.3" height="3.2" fill="#d4d8e4"/><rect x="22.4" y="6.2" width="3.3" height="3.2" fill="#ccd0dc"/></svg>
<div class="a" style="left:199.0px;top:35.32px;font-size:11.5px;line-height:11.5px;color:#1a1a1a">X</div>
<svg class="a" style="left:205.7px;top:33.8px" width="71" height="13"><rect x="0.00" y="0.0" width="3.2" height="3.3" fill="rgb(245,252,254)"/><rect x="0.00" y="3.2" width="3.2" height="3.3" fill="rgb(239,237,238)"/><rect x="0.00" y="6.4" width="3.2" height="3.3" fill="rgb(226,236,235)"/><rect x="0.00" y="9.6" width="3.2" height="3.3" fill="rgb(251,249,254)"/><rect x="3.08" y="0.0" width="3.2" height="3.3" fill="rgb(246,246,243)"/><rect x="3.08" y="3.2" width="3.2" height="3.3" fill="rgb(157,167,161)"/><rect x="3.08" y="6.4" width="3.2" height="3.3" fill="rgb(200,203,203)"/><rect x="3.08" y="9.6" width="3.2" height="3.3" fill="rgb(246,237,240)"/><rect x="6.16" y="0.0" width="3.2" height="3.3" fill="rgb(233,237,232)"/><rect x="6.16" y="3.2" width="3.2" height="3.3" fill="rgb(182,188,190)"/><rect x="6.16" y="6.4" width="3.2" height="3.3" fill="rgb(205,201,210)"/><rect x="6.16" y="9.6" width="3.2" height="3.3" fill="rgb(242,236,241)"/><rect x="9.24" y="0.0" width="3.2" height="3.3" fill="rgb(229,233,232)"/><rect x="9.24" y="3.2" width="3.2" height="3.3" fill="rgb(215,212,212)"/><rect x="9.24" y="6.4" width="3.2" height="3.3" fill="rgb(164,159,161)"/><rect x="9.24" y="9.6" width="3.2" height="3.3" fill="rgb(248,246,253)"/><rect x="12.32" y="0.0" width="3.2" height="3.3" fill="rgb(226,229,231)"/><rect x="12.32" y="3.2" width="3.2" height="3.3" fill="rgb(223,214,220)"/><rect x="12.32" y="6.4" width="3.2" height="3.3" fill="rgb(216,214,211)"/><rect x="12.32" y="9.6" width="3.2" height="3.3" fill="rgb(228,223,220)"/><rect x="15.40" y="0.0" width="3.2" height="3.3" fill="rgb(249,255,251)"/><rect x="15.40" y="3.2" width="3.2" height="3.3" fill="rgb(244,243,249)"/><rect x="15.40" y="6.4" width="3.2" height="3.3" fill="rgb(232,235,240)"/><rect x="15.40" y="9.6" width="3.2" height="3.3" fill="rgb(251,252,253)"/><rect x="18.48" y="0.0" width="3.2" height="3.3" fill="rgb(234,241,236)"/><rect x="18.48" y="3.2" width="3.2" height="3.3" fill="rgb(189,188,195)"/><rect x="18.48" y="6.4" width="3.2" height="3.3" fill="rgb(188,192,192)"/><rect x="18.48" y="9.6" width="3.2" height="3.3" fill="rgb(234,224,231)"/><rect x="21.56" y="0.0" width="3.2" height="3.3" fill="rgb(242,241,238)"/><rect x="21.56" y="3.2" width="3.2" height="3.3" fill="rgb(188,187,191)"/><rect x="21.56" y="6.4" width="3.2" height="3.3" fill="rgb(190,194,196)"/><rect x="21.56" y="9.6" width="3.2" height="3.3" fill="rgb(241,241,240)"/><rect x="24.64" y="0.0" width="3.2" height="3.3" fill="rgb(240,234,236)"/><rect x="24.64" y="3.2" width="3.2" height="3.3" fill="rgb(237,233,233)"/><rect x="24.64" y="6.4" width="3.2" height="3.3" fill="rgb(231,234,232)"/><rect x="24.64" y="9.6" width="3.2" height="3.3" fill="rgb(252,249,245)"/><rect x="27.72" y="0.0" width="3.2" height="3.3" fill="rgb(227,229,232)"/><rect x="27.72" y="3.2" width="3.2" height="3.3" fill="rgb(198,198,190)"/><rect x="27.72" y="6.4" width="3.2" height="3.3" fill="rgb(206,204,202)"/><rect x="27.72" y="9.6" width="3.2" height="3.3" fill="rgb(234,242,246)"/><rect x="30.80" y="0.0" width="3.2" height="3.3" fill="rgb(232,234,241)"/><rect x="30.80" y="3.2" width="3.2" height="3.3" fill="rgb(201,199,200)"/><rect x="30.80" y="6.4" width="3.2" height="3.3" fill="rgb(206,201,206)"/><rect x="30.80" y="9.6" width="3.2" height="3.3" fill="rgb(229,228,223)"/><rect x="33.88" y="0.0" width="3.2" height="3.3" fill="rgb(239,234,236)"/><rect x="33.88" y="3.2" width="3.2" height="3.3" fill="rgb(246,235,247)"/><rect x="33.88" y="6.4" width="3.2" height="3.3" fill="rgb(241,244,243)"/><rect x="33.88" y="9.6" width="3.2" height="3.3" fill="rgb(252,251,254)"/><rect x="36.96" y="0.0" width="3.2" height="3.3" fill="rgb(244,246,243)"/><rect x="36.96" y="3.2" width="3.2" height="3.3" fill="rgb(220,213,224)"/><rect x="36.96" y="6.4" width="3.2" height="3.3" fill="rgb(211,217,219)"/><rect x="36.96" y="9.6" width="3.2" height="3.3" fill="rgb(237,231,243)"/><rect x="40.04" y="0.0" width="3.2" height="3.3" fill="rgb(247,244,244)"/><rect x="40.04" y="3.2" width="3.2" height="3.3" fill="rgb(200,198,199)"/><rect x="40.04" y="6.4" width="3.2" height="3.3" fill="rgb(216,220,219)"/><rect x="40.04" y="9.6" width="3.2" height="3.3" fill="rgb(224,233,231)"/><rect x="43.12" y="0.0" width="3.2" height="3.3" fill="rgb(240,243,238)"/><rect x="43.12" y="3.2" width="3.2" height="3.3" fill="rgb(185,187,191)"/><rect x="43.12" y="6.4" width="3.2" height="3.3" fill="rgb(188,197,195)"/><rect x="43.12" y="9.6" width="3.2" height="3.3" fill="rgb(227,232,237)"/><rect x="46.20" y="0.0" width="3.2" height="3.3" fill="rgb(226,224,227)"/><rect x="46.20" y="3.2" width="3.2" height="3.3" fill="rgb(194,201,194)"/><rect x="46.20" y="6.4" width="3.2" height="3.3" fill="rgb(180,188,181)"/><rect x="46.20" y="9.6" width="3.2" height="3.3" fill="rgb(226,224,221)"/><rect x="49.28" y="0.0" width="3.2" height="3.3" fill="rgb(210,211,219)"/><rect x="49.28" y="3.2" width="3.2" height="3.3" fill="rgb(190,190,190)"/><rect x="49.28" y="6.4" width="3.2" height="3.3" fill="rgb(156,156,158)"/><rect x="49.28" y="9.6" width="3.2" height="3.3" fill="rgb(214,217,215)"/><rect x="52.36" y="0.0" width="3.2" height="3.3" fill="rgb(222,218,221)"/><rect x="52.36" y="3.2" width="3.2" height="3.3" fill="rgb(188,185,189)"/><rect x="52.36" y="6.4" width="3.2" height="3.3" fill="rgb(197,196,192)"/><rect x="52.36" y="9.6" width="3.2" height="3.3" fill="rgb(229,232,242)"/><rect x="55.44" y="0.0" width="3.2" height="3.3" fill="rgb(237,244,247)"/><rect x="55.44" y="3.2" width="3.2" height="3.3" fill="rgb(199,200,198)"/><rect x="55.44" y="6.4" width="3.2" height="3.3" fill="rgb(206,205,208)"/><rect x="55.44" y="9.6" width="3.2" height="3.3" fill="rgb(230,234,233)"/><rect x="58.52" y="0.0" width="3.2" height="3.3" fill="rgb(245,247,256)"/><rect x="58.52" y="3.2" width="3.2" height="3.3" fill="rgb(244,251,251)"/><rect x="58.52" y="6.4" width="3.2" height="3.3" fill="rgb(237,231,237)"/><rect x="58.52" y="9.6" width="3.2" height="3.3" fill="rgb(248,249,249)"/><rect x="61.60" y="0.0" width="3.2" height="3.3" fill="rgb(241,238,241)"/><rect x="61.60" y="3.2" width="3.2" height="3.3" fill="rgb(218,216,213)"/><rect x="61.60" y="6.4" width="3.2" height="3.3" fill="rgb(219,221,217)"/><rect x="61.60" y="9.6" width="3.2" height="3.3" fill="rgb(227,235,229)"/><rect x="64.68" y="0.0" width="3.2" height="3.3" fill="rgb(234,236,241)"/><rect x="64.68" y="3.2" width="3.2" height="3.3" fill="rgb(228,228,233)"/><rect x="64.68" y="6.4" width="3.2" height="3.3" fill="rgb(247,247,245)"/><rect x="64.68" y="9.6" width="3.2" height="3.3" fill="rgb(247,239,240)"/><rect x="67.76" y="0.0" width="3.2" height="3.3" fill="rgb(236,240,240)"/><rect x="67.76" y="3.2" width="3.2" height="3.3" fill="rgb(181,189,184)"/><rect x="67.76" y="6.4" width="3.2" height="3.3" fill="rgb(186,190,188)"/><rect x="67.76" y="9.6" width="3.2" height="3.3" fill="rgb(218,220,219)"/></svg>
<div class="a" style="left:357.5px;top:35.40px;font-size:11.4px;line-height:11.4px;color:#2472cc">71878401730</div>
<div class="a" style="left:452.1px;top:35.32px;font-size:11.5px;line-height:11.5px;color:#1a1a1a">1m ago</div>
<div class="a" style="left:605.9px;top:35.48px;font-size:11.3px;line-height:11.3px;color:#1a1a1a">Flea 4+</div>
<div class="a" style="left:799.1px;top:35.48px;font-size:11.3px;line-height:11.3px;color:#1a1a1a">2.9 GB</div>
<div class="a" style="left:953.8px;top:35.65px;font-size:11.1px;line-height:11.1px;color:#1a1a1a">stable 24.22.01</div>
<svg class="a" style="left:1097.3px;top:31.6px" width="15" height="15" viewBox="0 0 15 15"><circle cx="7.5" cy="7.5" r="7.2" fill="#cc1b12"/><path d="M7.5 3.5 V8.6" stroke="#fff" stroke-width="1.7"/><circle cx="7.5" cy="10.9" r="0.95" fill="#fff"/></svg>
<div class="a" style="left:0;top:54.3px;width:1282.8px;height:27.15px;background:#f9f9f9;border-top:1px solid #dcdcdc"></div>
<div class="a" style="left:19.0px;top:62.47px;font-size:11.5px;line-height:11.5px;color:#1a1a1a">x</div>
<svg class="a" style="left:25.4px;top:62.2px" width="26" height="10"><rect x="0.0" y="0.0" width="3.3" height="3.2" fill="#d0cccc"/><rect x="0.0" y="3.1" width="3.3" height="3.2" fill="#dfc9c3"/><rect x="0.0" y="6.2" width="3.3" height="3.2" fill="#d9cbc8"/><rect x="3.2" y="0.0" width="3.3" height="3.2" fill="#fafafa"/><rect x="3.2" y="3.1" width="3.3" height="3.2" fill="#e8f2f0"/><rect x="3.2" y="6.2" width="3.3" height="3.2" fill="#eef4f2"/><rect x="6.4" y="0.0" width="3.3" height="3.2" fill="#d4d2d0"/><rect x="6.4" y="3.1" width="3.3" height="3.2" fill="#e2dcd0"/><rect x="6.4" y="6.2" width="3.3" height="3.2" fill="#c6c6c6"/><rect x="9.6" y="0.0" width="3.3" height="3.2" fill="#e6ecec"/><rect x="9.6" y="3.1" width="3.3" height="3.2" fill="#c4c8d6"/><rect x="9.6" y="6.2" width="3.3" height="3.2" fill="#c8cad6"/><rect x="12.8" y="0.0" width="3.3" height="3.2" fill="#d0cccc"/><rect x="12.8" y="3.1" width="3.3" height="3.2" fill="#d6c4c4"/><rect x="12.8" y="6.2" width="3.3" height="3.2" fill="#d0c4c6"/><rect x="16.0" y="0.0" width="3.3" height="3.2" fill="#f4fafa"/><rect x="16.0" y="3.1" width="3.3" height="3.2" fill="#eeeee0"/><rect x="16.0" y="6.2" width="3.3" height="3.2" fill="#e6ece6"/><rect x="19.2" y="0.0" width="3.3" height="3.2" fill="#dad0ca"/><rect x="19.2" y="3.1" width="3.3" height="3.2" fill="#b8bcc0"/><rect x="19.2" y="6.2" width="3.3" height="3.2" fill="#bebebe"/><rect x="22.4" y="0.0" width="3.3" height="3.2" fill="#f2f2fa"/><rect x="22.4" y="3.1" width="3.3" height="3.2" fill="#d4d8e4"/><rect x="22.4" y="6.2" width="3.3" height="3.2" fill="#ccd0dc"/></svg>
<div class="a" style="left:199.0px;top:62.47px;font-size:11.5px;line-height:11.5px;color:#1a1a1a">B</div>
<svg class="a" style="left:205.7px;top:60.9px" width="71" height="13"><rect x="0.00" y="0.0" width="3.2" height="3.3" fill="rgb(219,225,226)"/><rect x="0.00" y="3.2" width="3.2" height="3.3" fill="rgb(184,188,194)"/><rect x="0.00" y="6.4" width="3.2" height="3.3" fill="rgb(197,204,207)"/><rect x="0.00" y="9.6" width="3.2" height="3.3" fill="rgb(226,235,238)"/><rect x="3.08" y="0.0" width="3.2" height="3.3" fill="rgb(231,230,228)"/><rect x="3.08" y="3.2" width="3.2" height="3.3" fill="rgb(219,223,227)"/><rect x="3.08" y="6.4" width="3.2" height="3.3" fill="rgb(208,209,208)"/><rect x="3.08" y="9.6" width="3.2" height="3.3" fill="rgb(236,238,243)"/><rect x="6.16" y="0.0" width="3.2" height="3.3" fill="rgb(243,236,243)"/><rect x="6.16" y="3.2" width="3.2" height="3.3" fill="rgb(205,214,205)"/><rect x="6.16" y="6.4" width="3.2" height="3.3" fill="rgb(212,213,212)"/><rect x="6.16" y="9.6" width="3.2" height="3.3" fill="rgb(219,220,219)"/><rect x="9.24" y="0.0" width="3.2" height="3.3" fill="rgb(230,227,238)"/><rect x="9.24" y="3.2" width="3.2" height="3.3" fill="rgb(233,237,240)"/><rect x="9.24" y="6.4" width="3.2" height="3.3" fill="rgb(242,241,233)"/><rect x="9.24" y="9.6" width="3.2" height="3.3" fill="rgb(240,244,249)"/><rect x="12.32" y="0.0" width="3.2" height="3.3" fill="rgb(242,239,244)"/><rect x="12.32" y="3.2" width="3.2" height="3.3" fill="rgb(202,209,204)"/><rect x="12.32" y="6.4" width="3.2" height="3.3" fill="rgb(197,200,198)"/><rect x="12.32" y="9.6" width="3.2" height="3.3" fill="rgb(235,236,238)"/><rect x="15.40" y="0.0" width="3.2" height="3.3" fill="rgb(250,253,246)"/><rect x="15.40" y="3.2" width="3.2" height="3.3" fill="rgb(237,230,234)"/><rect x="15.40" y="6.4" width="3.2" height="3.3" fill="rgb(239,236,242)"/><rect x="15.40" y="9.6" width="3.2" height="3.3" fill="rgb(240,244,242)"/><rect x="18.48" y="0.0" width="3.2" height="3.3" fill="rgb(246,236,248)"/><rect x="18.48" y="3.2" width="3.2" height="3.3" fill="rgb(196,206,198)"/><rect x="18.48" y="6.4" width="3.2" height="3.3" fill="rgb(190,190,191)"/><rect x="18.48" y="9.6" width="3.2" height="3.3" fill="rgb(219,215,220)"/><rect x="21.56" y="0.0" width="3.2" height="3.3" fill="rgb(230,233,244)"/><rect x="21.56" y="3.2" width="3.2" height="3.3" fill="rgb(211,204,207)"/><rect x="21.56" y="6.4" width="3.2" height="3.3" fill="rgb(209,215,222)"/><rect x="21.56" y="9.6" width="3.2" height="3.3" fill="rgb(229,239,240)"/><rect x="24.64" y="0.0" width="3.2" height="3.3" fill="rgb(253,252,244)"/><rect x="24.64" y="3.2" width="3.2" height="3.3" fill="rgb(251,248,242)"/><rect x="24.64" y="6.4" width="3.2" height="3.3" fill="rgb(230,237,234)"/><rect x="24.64" y="9.6" width="3.2" height="3.3" fill="rgb(239,235,242)"/><rect x="27.72" y="0.0" width="3.2" height="3.3" fill="rgb(231,239,236)"/><rect x="27.72" y="3.2" width="3.2" height="3.3" fill="rgb(237,233,238)"/><rect x="27.72" y="6.4" width="3.2" height="3.3" fill="rgb(234,239,237)"/><rect x="27.72" y="9.6" width="3.2" height="3.3" fill="rgb(246,255,255)"/><rect x="30.80" y="0.0" width="3.2" height="3.3" fill="rgb(229,235,235)"/><rect x="30.80" y="3.2" width="3.2" height="3.3" fill="rgb(215,209,216)"/><rect x="30.80" y="6.4" width="3.2" height="3.3" fill="rgb(209,202,212)"/><rect x="30.80" y="9.6" width="3.2" height="3.3" fill="rgb(252,243,246)"/><rect x="33.88" y="0.0" width="3.2" height="3.3" fill="rgb(246,241,253)"/><rect x="33.88" y="3.2" width="3.2" height="3.3" fill="rgb(241,245,243)"/><rect x="33.88" y="6.4" width="3.2" height="3.3" fill="rgb(250,246,246)"/><rect x="33.88" y="9.6" width="3.2" height="3.3" fill="rgb(254,249,247)"/><rect x="36.96" y="0.0" width="3.2" height="3.3" fill="rgb(235,236,233)"/><rect x="36.96" y="3.2" width="3.2" height="3.3" fill="rgb(228,229,228)"/><rect x="36.96" y="6.4" width="3.2" height="3.3" fill="rgb(206,205,215)"/><rect x="36.96" y="9.6" width="3.2" height="3.3" fill="rgb(226,224,229)"/><rect x="40.04" y="0.0" width="3.2" height="3.3" fill="rgb(230,227,226)"/><rect x="40.04" y="3.2" width="3.2" height="3.3" fill="rgb(208,209,208)"/><rect x="40.04" y="6.4" width="3.2" height="3.3" fill="rgb(202,200,210)"/><rect x="40.04" y="9.6" width="3.2" height="3.3" fill="rgb(226,232,235)"/><rect x="43.12" y="0.0" width="3.2" height="3.3" fill="rgb(246,247,251)"/><rect x="43.12" y="3.2" width="3.2" height="3.3" fill="rgb(234,228,239)"/><rect x="43.12" y="6.4" width="3.2" height="3.3" fill="rgb(224,225,232)"/><rect x="43.12" y="9.6" width="3.2" height="3.3" fill="rgb(243,243,244)"/><rect x="46.20" y="0.0" width="3.2" height="3.3" fill="rgb(242,239,234)"/><rect x="46.20" y="3.2" width="3.2" height="3.3" fill="rgb(168,166,168)"/><rect x="46.20" y="6.4" width="3.2" height="3.3" fill="rgb(188,186,198)"/><rect x="46.20" y="9.6" width="3.2" height="3.3" fill="rgb(217,219,219)"/><rect x="49.28" y="0.0" width="3.2" height="3.3" fill="rgb(240,240,247)"/><rect x="49.28" y="3.2" width="3.2" height="3.3" fill="rgb(239,243,245)"/><rect x="49.28" y="6.4" width="3.2" height="3.3" fill="rgb(235,236,236)"/><rect x="49.28" y="9.6" width="3.2" height="3.3" fill="rgb(246,234,246)"/><rect x="52.36" y="0.0" width="3.2" height="3.3" fill="rgb(251,242,249)"/><rect x="52.36" y="3.2" width="3.2" height="3.3" fill="rgb(247,244,244)"/><rect x="52.36" y="6.4" width="3.2" height="3.3" fill="rgb(228,230,234)"/><rect x="52.36" y="9.6" width="3.2" height="3.3" fill="rgb(253,245,248)"/><rect x="55.44" y="0.0" width="3.2" height="3.3" fill="rgb(232,233,234)"/><rect x="55.44" y="3.2" width="3.2" height="3.3" fill="rgb(206,203,207)"/><rect x="55.44" y="6.4" width="3.2" height="3.3" fill="rgb(193,200,198)"/><rect x="55.44" y="9.6" width="3.2" height="3.3" fill="rgb(224,225,228)"/><rect x="58.52" y="0.0" width="3.2" height="3.3" fill="rgb(246,246,250)"/><rect x="58.52" y="3.2" width="3.2" height="3.3" fill="rgb(242,242,236)"/><rect x="58.52" y="6.4" width="3.2" height="3.3" fill="rgb(236,235,242)"/><rect x="58.52" y="9.6" width="3.2" height="3.3" fill="rgb(243,245,245)"/><rect x="61.60" y="0.0" width="3.2" height="3.3" fill="rgb(228,226,232)"/><rect x="61.60" y="3.2" width="3.2" height="3.3" fill="rgb(213,217,215)"/><rect x="61.60" y="6.4" width="3.2" height="3.3" fill="rgb(213,208,209)"/><rect x="61.60" y="9.6" width="3.2" height="3.3" fill="rgb(244,249,253)"/><rect x="64.68" y="0.0" width="3.2" height="3.3" fill="rgb(224,227,220)"/><rect x="64.68" y="3.2" width="3.2" height="3.3" fill="rgb(195,190,198)"/><rect x="64.68" y="6.4" width="3.2" height="3.3" fill="rgb(182,185,184)"/><rect x="64.68" y="9.6" width="3.2" height="3.3" fill="rgb(235,235,233)"/></svg>
<div class="a" style="left:357.5px;top:62.55px;font-size:11.4px;line-height:11.4px;color:#2472cc">71878403141</div>
<div class="a" style="left:452.1px;top:62.47px;font-size:11.5px;line-height:11.5px;color:#1a1a1a">2m ago</div>
<div class="a" style="left:605.9px;top:62.63px;font-size:11.3px;line-height:11.3px;color:#1a1a1a">Flea 4+</div>
<div class="a" style="left:799.1px;top:62.63px;font-size:11.3px;line-height:11.3px;color:#1a1a1a">2.4 GB</div>
<div class="a" style="left:953.8px;top:62.80px;font-size:11.1px;line-height:11.1px;color:#1a1a1a">stable 24.22.01</div>
<svg class="a" style="left:1097.3px;top:58.8px" width="15" height="15" viewBox="0 0 15 15"><circle cx="7.5" cy="7.5" r="7.2" fill="#cc1b12"/><path d="M7.5 3.5 V8.6" stroke="#fff" stroke-width="1.7"/><circle cx="7.5" cy="10.9" r="0.95" fill="#fff"/></svg>
<div class="a" style="left:0;top:81.4px;width:1282.8px;height:27.15px;background:#fff;border-top:1px solid #dcdcdc"></div>
<div class="a" style="left:19.0px;top:89.62px;font-size:11.5px;line-height:11.5px;color:#1a1a1a">x</div>
<svg class="a" style="left:25.4px;top:89.3px" width="26" height="10"><rect x="0.0" y="0.0" width="3.3" height="3.2" fill="#d0cccc"/><rect x="0.0" y="3.1" width="3.3" height="3.2" fill="#dfc9c3"/><rect x="0.0" y="6.2" width="3.3" height="3.2" fill="#d9cbc8"/><rect x="3.2" y="0.0" width="3.3" height="3.2" fill="#fafafa"/><rect x="3.2" y="3.1" width="3.3" height="3.2" fill="#e8f2f0"/><rect x="3.2" y="6.2" width="3.3" height="3.2" fill="#eef4f2"/><rect x="6.4" y="0.0" width="3.3" height="3.2" fill="#d4d2d0"/><rect x="6.4" y="3.1" width="3.3" height="3.2" fill="#e2dcd0"/><rect x="6.4" y="6.2" width="3.3" height="3.2" fill="#c6c6c6"/><rect x="9.6" y="0.0" width="3.3" height="3.2" fill="#e6ecec"/><rect x="9.6" y="3.1" width="3.3" height="3.2" fill="#c4c8d6"/><rect x="9.6" y="6.2" width="3.3" height="3.2" fill="#c8cad6"/><rect x="12.8" y="0.0" width="3.3" height="3.2" fill="#d0cccc"/><rect x="12.8" y="3.1" width="3.3" height="3.2" fill="#d6c4c4"/><rect x="12.8" y="6.2" width="3.3" height="3.2" fill="#d0c4c6"/><rect x="16.0" y="0.0" width="3.3" height="3.2" fill="#f4fafa"/><rect x="16.0" y="3.1" width="3.3" height="3.2" fill="#eeeee0"/><rect x="16.0" y="6.2" width="3.3" height="3.2" fill="#e6ece6"/><rect x="19.2" y="0.0" width="3.3" height="3.2" fill="#dad0ca"/><rect x="19.2" y="3.1" width="3.3" height="3.2" fill="#b8bcc0"/><rect x="19.2" y="6.2" width="3.3" height="3.2" fill="#bebebe"/><rect x="22.4" y="0.0" width="3.3" height="3.2" fill="#f2f2fa"/><rect x="22.4" y="3.1" width="3.3" height="3.2" fill="#d4d8e4"/><rect x="22.4" y="6.2" width="3.3" height="3.2" fill="#ccd0dc"/></svg>
<div class="a" style="left:199.0px;top:89.62px;font-size:11.5px;line-height:11.5px;color:#1a1a1a">B</div>
<svg class="a" style="left:205.7px;top:88.0px" width="71" height="13"><rect x="0.00" y="0.0" width="3.2" height="3.3" fill="rgb(227,217,225)"/><rect x="0.00" y="3.2" width="3.2" height="3.3" fill="rgb(199,206,208)"/><rect x="0.00" y="6.4" width="3.2" height="3.3" fill="rgb(191,193,184)"/><rect x="0.00" y="9.6" width="3.2" height="3.3" fill="rgb(232,228,228)"/><rect x="3.08" y="0.0" width="3.2" height="3.3" fill="rgb(239,240,246)"/><rect x="3.08" y="3.2" width="3.2" height="3.3" fill="rgb(244,237,241)"/><rect x="3.08" y="6.4" width="3.2" height="3.3" fill="rgb(234,233,239)"/><rect x="3.08" y="9.6" width="3.2" height="3.3" fill="rgb(249,247,252)"/><rect x="6.16" y="0.0" width="3.2" height="3.3" fill="rgb(223,219,220)"/><rect x="6.16" y="3.2" width="3.2" height="3.3" fill="rgb(211,200,207)"/><rect x="6.16" y="6.4" width="3.2" height="3.3" fill="rgb(193,189,196)"/><rect x="6.16" y="9.6" width="3.2" height="3.3" fill="rgb(241,237,244)"/><rect x="9.24" y="0.0" width="3.2" height="3.3" fill="rgb(238,243,245)"/><rect x="9.24" y="3.2" width="3.2" height="3.3" fill="rgb(190,190,182)"/><rect x="9.24" y="6.4" width="3.2" height="3.3" fill="rgb(184,188,181)"/><rect x="9.24" y="9.6" width="3.2" height="3.3" fill="rgb(238,238,241)"/><rect x="12.32" y="0.0" width="3.2" height="3.3" fill="rgb(218,219,218)"/><rect x="12.32" y="3.2" width="3.2" height="3.3" fill="rgb(188,191,194)"/><rect x="12.32" y="6.4" width="3.2" height="3.3" fill="rgb(163,160,162)"/><rect x="12.32" y="9.6" width="3.2" height="3.3" fill="rgb(236,233,241)"/><rect x="15.40" y="0.0" width="3.2" height="3.3" fill="rgb(249,244,254)"/><rect x="15.40" y="3.2" width="3.2" height="3.3" fill="rgb(239,231,236)"/><rect x="15.40" y="6.4" width="3.2" height="3.3" fill="rgb(253,244,257)"/><rect x="15.40" y="9.6" width="3.2" height="3.3" fill="rgb(240,250,251)"/><rect x="18.48" y="0.0" width="3.2" height="3.3" fill="rgb(237,237,237)"/><rect x="18.48" y="3.2" width="3.2" height="3.3" fill="rgb(229,234,238)"/><rect x="18.48" y="6.4" width="3.2" height="3.3" fill="rgb(238,235,238)"/><rect x="18.48" y="9.6" width="3.2" height="3.3" fill="rgb(250,246,251)"/><rect x="21.56" y="0.0" width="3.2" height="3.3" fill="rgb(233,238,235)"/><rect x="21.56" y="3.2" width="3.2" height="3.3" fill="rgb(205,209,202)"/><rect x="21.56" y="6.4" width="3.2" height="3.3" fill="rgb(201,210,207)"/><rect x="21.56" y="9.6" width="3.2" height="3.3" fill="rgb(235,234,230)"/><rect x="24.64" y="0.0" width="3.2" height="3.3" fill="rgb(232,240,232)"/><rect x="24.64" y="3.2" width="3.2" height="3.3" fill="rgb(250,249,255)"/><rect x="24.64" y="6.4" width="3.2" height="3.3" fill="rgb(248,246,245)"/><rect x="24.64" y="9.6" width="3.2" height="3.3" fill="rgb(247,246,255)"/><rect x="27.72" y="0.0" width="3.2" height="3.3" fill="rgb(233,238,233)"/><rect x="27.72" y="3.2" width="3.2" height="3.3" fill="rgb(191,190,197)"/><rect x="27.72" y="6.4" width="3.2" height="3.3" fill="rgb(180,186,188)"/><rect x="27.72" y="9.6" width="3.2" height="3.3" fill="rgb(223,230,231)"/><rect x="30.80" y="0.0" width="3.2" height="3.3" fill="rgb(240,239,237)"/><rect x="30.80" y="3.2" width="3.2" height="3.3" fill="rgb(214,213,222)"/><rect x="30.80" y="6.4" width="3.2" height="3.3" fill="rgb(212,216,216)"/><rect x="30.80" y="9.6" width="3.2" height="3.3" fill="rgb(244,252,246)"/><rect x="33.88" y="0.0" width="3.2" height="3.3" fill="rgb(231,236,234)"/><rect x="33.88" y="3.2" width="3.2" height="3.3" fill="rgb(242,242,241)"/><rect x="33.88" y="6.4" width="3.2" height="3.3" fill="rgb(243,234,240)"/><rect x="33.88" y="9.6" width="3.2" height="3.3" fill="rgb(246,253,257)"/><rect x="36.96" y="0.0" width="3.2" height="3.3" fill="rgb(226,224,234)"/><rect x="36.96" y="3.2" width="3.2" height="3.3" fill="rgb(192,182,192)"/><rect x="36.96" y="6.4" width="3.2" height="3.3" fill="rgb(189,181,182)"/><rect x="36.96" y="9.6" width="3.2" height="3.3" fill="rgb(225,234,230)"/><rect x="40.04" y="0.0" width="3.2" height="3.3" fill="rgb(228,234,235)"/><rect x="40.04" y="3.2" width="3.2" height="3.3" fill="rgb(192,198,197)"/><rect x="40.04" y="6.4" width="3.2" height="3.3" fill="rgb(203,212,210)"/><rect x="40.04" y="9.6" width="3.2" height="3.3" fill="rgb(216,217,226)"/><rect x="43.12" y="0.0" width="3.2" height="3.3" fill="rgb(241,234,243)"/><rect x="43.12" y="3.2" width="3.2" height="3.3" fill="rgb(197,201,206)"/><rect x="43.12" y="6.4" width="3.2" height="3.3" fill="rgb(194,197,196)"/><rect x="43.12" y="9.6" width="3.2" height="3.3" fill="rgb(223,225,218)"/><rect x="46.20" y="0.0" width="3.2" height="3.3" fill="rgb(232,234,233)"/><rect x="46.20" y="3.2" width="3.2" height="3.3" fill="rgb(229,228,227)"/><rect x="46.20" y="6.4" width="3.2" height="3.3" fill="rgb(226,233,240)"/><rect x="46.20" y="9.6" width="3.2" height="3.3" fill="rgb(231,236,230)"/><rect x="49.28" y="0.0" width="3.2" height="3.3" fill="rgb(237,237,238)"/><rect x="49.28" y="3.2" width="3.2" height="3.3" fill="rgb(207,207,199)"/><rect x="49.28" y="6.4" width="3.2" height="3.3" fill="rgb(188,191,188)"/><rect x="49.28" y="9.6" width="3.2" height="3.3" fill="rgb(215,216,219)"/><rect x="52.36" y="0.0" width="3.2" height="3.3" fill="rgb(238,238,235)"/><rect x="52.36" y="3.2" width="3.2" height="3.3" fill="rgb(200,199,201)"/><rect x="52.36" y="6.4" width="3.2" height="3.3" fill="rgb(186,194,192)"/><rect x="52.36" y="9.6" width="3.2" height="3.3" fill="rgb(232,230,235)"/><rect x="55.44" y="0.0" width="3.2" height="3.3" fill="rgb(227,228,239)"/><rect x="55.44" y="3.2" width="3.2" height="3.3" fill="rgb(195,193,197)"/><rect x="55.44" y="6.4" width="3.2" height="3.3" fill="rgb(205,199,206)"/><rect x="55.44" y="9.6" width="3.2" height="3.3" fill="rgb(224,225,225)"/><rect x="58.52" y="0.0" width="3.2" height="3.3" fill="rgb(253,254,248)"/><rect x="58.52" y="3.2" width="3.2" height="3.3" fill="rgb(255,250,248)"/><rect x="58.52" y="6.4" width="3.2" height="3.3" fill="rgb(244,250,248)"/><rect x="58.52" y="9.6" width="3.2" height="3.3" fill="rgb(254,248,246)"/><rect x="61.60" y="0.0" width="3.2" height="3.3" fill="rgb(244,244,238)"/><rect x="61.60" y="3.2" width="3.2" height="3.3" fill="rgb(214,214,208)"/><rect x="61.60" y="6.4" width="3.2" height="3.3" fill="rgb(190,191,193)"/><rect x="61.60" y="9.6" width="3.2" height="3.3" fill="rgb(230,230,232)"/><rect x="64.68" y="0.0" width="3.2" height="3.3" fill="rgb(248,243,241)"/><rect x="64.68" y="3.2" width="3.2" height="3.3" fill="rgb(159,158,166)"/><rect x="64.68" y="6.4" width="3.2" height="3.3" fill="rgb(187,189,194)"/><rect x="64.68" y="9.6" width="3.2" height="3.3" fill="rgb(248,245,249)"/><rect x="67.76" y="0.0" width="3.2" height="3.3" fill="rgb(220,219,218)"/><rect x="67.76" y="3.2" width="3.2" height="3.3" fill="rgb(202,200,206)"/><rect x="67.76" y="6.4" width="3.2" height="3.3" fill="rgb(207,200,198)"/><rect x="67.76" y="9.6" width="3.2" height="3.3" fill="rgb(242,243,240)"/></svg>
<div class="a" style="left:357.5px;top:89.70px;font-size:11.4px;line-height:11.4px;color:#2472cc">71878402815</div>
<div class="a" style="left:452.1px;top:89.62px;font-size:11.5px;line-height:11.5px;color:#1a1a1a">3m ago</div>
<div class="a" style="left:605.9px;top:89.78px;font-size:11.3px;line-height:11.3px;color:#1a1a1a">Flea 4+</div>
<div class="a" style="left:799.1px;top:89.78px;font-size:11.3px;line-height:11.3px;color:#1a1a1a">1.0 GB</div>
<div class="a" style="left:953.8px;top:89.95px;font-size:11.1px;line-height:11.1px;color:#1a1a1a">stable 24.22.01</div>
<svg class="a" style="left:1097.3px;top:85.9px" width="15" height="15" viewBox="0 0 15 15"><circle cx="7.5" cy="7.5" r="7.2" fill="#cc1b12"/><path d="M7.5 3.5 V8.6" stroke="#fff" stroke-width="1.7"/><circle cx="7.5" cy="10.9" r="0.95" fill="#fff"/></svg>
<div class="a" style="left:0;top:108.6px;width:1282.8px;height:27.15px;background:#f9f9f9;border-top:1px solid #dcdcdc"></div>
<div class="a" style="left:19.0px;top:116.77px;font-size:11.5px;line-height:11.5px;color:#1a1a1a">x</div>
<svg class="a" style="left:25.4px;top:116.5px" width="26" height="10"><rect x="0.0" y="0.0" width="3.3" height="3.2" fill="#d0cccc"/><rect x="0.0" y="3.1" width="3.3" height="3.2" fill="#dfc9c3"/><rect x="0.0" y="6.2" width="3.3" height="3.2" fill="#d9cbc8"/><rect x="3.2" y="0.0" width="3.3" height="3.2" fill="#fafafa"/><rect x="3.2" y="3.1" width="3.3" height="3.2" fill="#e8f2f0"/><rect x="3.2" y="6.2" width="3.3" height="3.2" fill="#eef4f2"/><rect x="6.4" y="0.0" width="3.3" height="3.2" fill="#d4d2d0"/><rect x="6.4" y="3.1" width="3.3" height="3.2" fill="#e2dcd0"/><rect x="6.4" y="6.2" width="3.3" height="3.2" fill="#c6c6c6"/><rect x="9.6" y="0.0" width="3.3" height="3.2" fill="#e6ecec"/><rect x="9.6" y="3.1" width="3.3" height="3.2" fill="#c4c8d6"/><rect x="9.6" y="6.2" width="3.3" height="3.2" fill="#c8cad6"/><rect x="12.8" y="0.0" width="3.3" height="3.2" fill="#d0cccc"/><rect x="12.8" y="3.1" width="3.3" height="3.2" fill="#d6c4c4"/><rect x="12.8" y="6.2" width="3.3" height="3.2" fill="#d0c4c6"/><rect x="16.0" y="0.0" width="3.3" height="3.2" fill="#f4fafa"/><rect x="16.0" y="3.1" width="3.3" height="3.2" fill="#eeeee0"/><rect x="16.0" y="6.2" width="3.3" height="3.2" fill="#e6ece6"/><rect x="19.2" y="0.0" width="3.3" height="3.2" fill="#dad0ca"/><rect x="19.2" y="3.1" width="3.3" height="3.2" fill="#b8bcc0"/><rect x="19.2" y="6.2" width="3.3" height="3.2" fill="#bebebe"/><rect x="22.4" y="0.0" width="3.3" height="3.2" fill="#f2f2fa"/><rect x="22.4" y="3.1" width="3.3" height="3.2" fill="#d4d8e4"/><rect x="22.4" y="6.2" width="3.3" height="3.2" fill="#ccd0dc"/></svg>
<div class="a" style="left:199.0px;top:116.77px;font-size:11.5px;line-height:11.5px;color:#1a1a1a">B</div>
<svg class="a" style="left:205.7px;top:115.2px" width="71" height="13"><rect x="0.00" y="0.0" width="3.2" height="3.3" fill="rgb(243,242,255)"/><rect x="0.00" y="3.2" width="3.2" height="3.3" fill="rgb(238,248,238)"/><rect x="0.00" y="6.4" width="3.2" height="3.3" fill="rgb(252,250,248)"/><rect x="0.00" y="9.6" width="3.2" height="3.3" fill="rgb(247,249,244)"/><rect x="3.08" y="0.0" width="3.2" height="3.3" fill="rgb(244,236,238)"/><rect x="3.08" y="3.2" width="3.2" height="3.3" fill="rgb(213,212,208)"/><rect x="3.08" y="6.4" width="3.2" height="3.3" fill="rgb(223,211,222)"/><rect x="3.08" y="9.6" width="3.2" height="3.3" fill="rgb(223,230,231)"/><rect x="6.16" y="0.0" width="3.2" height="3.3" fill="rgb(239,236,239)"/><rect x="6.16" y="3.2" width="3.2" height="3.3" fill="rgb(210,206,207)"/><rect x="6.16" y="6.4" width="3.2" height="3.3" fill="rgb(207,209,207)"/><rect x="6.16" y="9.6" width="3.2" height="3.3" fill="rgb(222,220,221)"/><rect x="9.24" y="0.0" width="3.2" height="3.3" fill="rgb(225,231,230)"/><rect x="9.24" y="3.2" width="3.2" height="3.3" fill="rgb(186,191,188)"/><rect x="9.24" y="6.4" width="3.2" height="3.3" fill="rgb(187,187,200)"/><rect x="9.24" y="9.6" width="3.2" height="3.3" fill="rgb(238,243,247)"/><rect x="12.32" y="0.0" width="3.2" height="3.3" fill="rgb(236,240,244)"/><rect x="12.32" y="3.2" width="3.2" height="3.3" fill="rgb(187,182,188)"/><rect x="12.32" y="6.4" width="3.2" height="3.3" fill="rgb(184,174,182)"/><rect x="12.32" y="9.6" width="3.2" height="3.3" fill="rgb(215,214,221)"/><rect x="15.40" y="0.0" width="3.2" height="3.3" fill="rgb(245,254,246)"/><rect x="15.40" y="3.2" width="3.2" height="3.3" fill="rgb(236,244,240)"/><rect x="15.40" y="6.4" width="3.2" height="3.3" fill="rgb(252,250,256)"/><rect x="15.40" y="9.6" width="3.2" height="3.3" fill="rgb(251,248,253)"/><rect x="18.48" y="0.0" width="3.2" height="3.3" fill="rgb(230,228,228)"/><rect x="18.48" y="3.2" width="3.2" height="3.3" fill="rgb(191,182,191)"/><rect x="18.48" y="6.4" width="3.2" height="3.3" fill="rgb(174,181,175)"/><rect x="18.48" y="9.6" width="3.2" height="3.3" fill="rgb(217,221,215)"/><rect x="21.56" y="0.0" width="3.2" height="3.3" fill="rgb(254,247,248)"/><rect x="21.56" y="3.2" width="3.2" height="3.3" fill="rgb(234,239,236)"/><rect x="21.56" y="6.4" width="3.2" height="3.3" fill="rgb(248,252,250)"/><rect x="21.56" y="9.6" width="3.2" height="3.3" fill="rgb(237,241,242)"/><rect x="24.64" y="0.0" width="3.2" height="3.3" fill="rgb(228,225,223)"/><rect x="24.64" y="3.2" width="3.2" height="3.3" fill="rgb(195,197,190)"/><rect x="24.64" y="6.4" width="3.2" height="3.3" fill="rgb(193,185,188)"/><rect x="24.64" y="9.6" width="3.2" height="3.3" fill="rgb(213,211,219)"/><rect x="27.72" y="0.0" width="3.2" height="3.3" fill="rgb(225,217,229)"/><rect x="27.72" y="3.2" width="3.2" height="3.3" fill="rgb(199,204,198)"/><rect x="27.72" y="6.4" width="3.2" height="3.3" fill="rgb(188,196,197)"/><rect x="27.72" y="9.6" width="3.2" height="3.3" fill="rgb(248,239,248)"/><rect x="30.80" y="0.0" width="3.2" height="3.3" fill="rgb(230,228,221)"/><rect x="30.80" y="3.2" width="3.2" height="3.3" fill="rgb(205,195,196)"/><rect x="30.80" y="6.4" width="3.2" height="3.3" fill="rgb(197,198,199)"/><rect x="30.80" y="9.6" width="3.2" height="3.3" fill="rgb(241,237,240)"/><rect x="33.88" y="0.0" width="3.2" height="3.3" fill="rgb(245,248,246)"/><rect x="33.88" y="3.2" width="3.2" height="3.3" fill="rgb(249,248,257)"/><rect x="33.88" y="6.4" width="3.2" height="3.3" fill="rgb(247,242,244)"/><rect x="33.88" y="9.6" width="3.2" height="3.3" fill="rgb(249,254,250)"/><rect x="36.96" y="0.0" width="3.2" height="3.3" fill="rgb(241,243,240)"/><rect x="36.96" y="3.2" width="3.2" height="3.3" fill="rgb(195,193,194)"/><rect x="36.96" y="6.4" width="3.2" height="3.3" fill="rgb(187,181,188)"/><rect x="36.96" y="9.6" width="3.2" height="3.3" fill="rgb(228,235,235)"/><rect x="40.04" y="0.0" width="3.2" height="3.3" fill="rgb(230,225,234)"/><rect x="40.04" y="3.2" width="3.2" height="3.3" fill="rgb(200,190,201)"/><rect x="40.04" y="6.4" width="3.2" height="3.3" fill="rgb(201,199,198)"/><rect x="40.04" y="9.6" width="3.2" height="3.3" fill="rgb(238,237,234)"/><rect x="43.12" y="0.0" width="3.2" height="3.3" fill="rgb(227,233,232)"/><rect x="43.12" y="3.2" width="3.2" height="3.3" fill="rgb(210,202,211)"/><rect x="43.12" y="6.4" width="3.2" height="3.3" fill="rgb(217,213,216)"/><rect x="43.12" y="9.6" width="3.2" height="3.3" fill="rgb(231,234,234)"/><rect x="46.20" y="0.0" width="3.2" height="3.3" fill="rgb(220,217,226)"/><rect x="46.20" y="3.2" width="3.2" height="3.3" fill="rgb(207,208,213)"/><rect x="46.20" y="6.4" width="3.2" height="3.3" fill="rgb(189,186,191)"/><rect x="46.20" y="9.6" width="3.2" height="3.3" fill="rgb(238,239,247)"/><rect x="49.28" y="0.0" width="3.2" height="3.3" fill="rgb(231,226,227)"/><rect x="49.28" y="3.2" width="3.2" height="3.3" fill="rgb(176,177,177)"/><rect x="49.28" y="6.4" width="3.2" height="3.3" fill="rgb(190,181,193)"/><rect x="49.28" y="9.6" width="3.2" height="3.3" fill="rgb(218,217,228)"/><rect x="52.36" y="0.0" width="3.2" height="3.3" fill="rgb(228,228,232)"/><rect x="52.36" y="3.2" width="3.2" height="3.3" fill="rgb(183,183,186)"/><rect x="52.36" y="6.4" width="3.2" height="3.3" fill="rgb(202,204,205)"/><rect x="52.36" y="9.6" width="3.2" height="3.3" fill="rgb(239,231,235)"/><rect x="55.44" y="0.0" width="3.2" height="3.3" fill="rgb(214,218,222)"/><rect x="55.44" y="3.2" width="3.2" height="3.3" fill="rgb(185,191,198)"/><rect x="55.44" y="6.4" width="3.2" height="3.3" fill="rgb(183,183,178)"/><rect x="55.44" y="9.6" width="3.2" height="3.3" fill="rgb(215,213,213)"/><rect x="58.52" y="0.0" width="3.2" height="3.3" fill="rgb(239,240,249)"/><rect x="58.52" y="3.2" width="3.2" height="3.3" fill="rgb(247,250,247)"/><rect x="58.52" y="6.4" width="3.2" height="3.3" fill="rgb(248,239,247)"/><rect x="58.52" y="9.6" width="3.2" height="3.3" fill="rgb(250,245,248)"/><rect x="61.60" y="0.0" width="3.2" height="3.3" fill="rgb(226,220,228)"/><rect x="61.60" y="3.2" width="3.2" height="3.3" fill="rgb(198,196,194)"/><rect x="61.60" y="6.4" width="3.2" height="3.3" fill="rgb(192,189,191)"/><rect x="61.60" y="9.6" width="3.2" height="3.3" fill="rgb(227,228,228)"/><rect x="64.68" y="0.0" width="3.2" height="3.3" fill="rgb(245,244,240)"/><rect x="64.68" y="3.2" width="3.2" height="3.3" fill="rgb(189,190,191)"/><rect x="64.68" y="6.4" width="3.2" height="3.3" fill="rgb(190,191,195)"/><rect x="64.68" y="9.6" width="3.2" height="3.3" fill="rgb(244,240,240)"/><rect x="67.76" y="0.0" width="3.2" height="3.3" fill="rgb(241,248,248)"/><rect x="67.76" y="3.2" width="3.2" height="3.3" fill="rgb(217,223,225)"/><rect x="67.76" y="6.4" width="3.2" height="3.3" fill="rgb(213,219,216)"/><rect x="67.76" y="9.6" width="3.2" height="3.3" fill="rgb(241,241,244)"/></svg>
<div class="a" style="left:357.5px;top:116.85px;font-size:11.4px;line-height:11.4px;color:#2472cc">71878402492</div>
<div class="a" style="left:452.1px;top:116.77px;font-size:11.5px;line-height:11.5px;color:#1a1a1a">4m ago</div>
<div class="a" style="left:605.9px;top:116.93px;font-size:11.3px;line-height:11.3px;color:#1a1a1a">Flea 4+</div>
<div class="a" style="left:799.1px;top:116.93px;font-size:11.3px;line-height:11.3px;color:#1a1a1a">460.7 MB</div>
<div class="a" style="left:953.8px;top:117.10px;font-size:11.1px;line-height:11.1px;color:#1a1a1a">stable 24.22.01</div>
<svg class="a" style="left:1097.3px;top:113.1px" width="15" height="15" viewBox="0 0 15 15"><circle cx="7.5" cy="7.5" r="7.2" fill="#cc1b12"/><path d="M7.5 3.5 V8.6" stroke="#fff" stroke-width="1.7"/><circle cx="7.5" cy="10.9" r="0.95" fill="#fff"/></svg>
<div class="a" style="left:0;top:135.8px;width:1282.8px;height:27.15px;background:#fff;border-top:1px solid #dcdcdc"></div>
<div class="a" style="left:19.0px;top:143.92px;font-size:11.5px;line-height:11.5px;color:#1a1a1a">x</div>
<svg class="a" style="left:25.4px;top:143.7px" width="26" height="10"><rect x="0.0" y="0.0" width="3.3" height="3.2" fill="#d0cccc"/><rect x="0.0" y="3.1" width="3.3" height="3.2" fill="#dfc9c3"/><rect x="0.0" y="6.2" width="3.3" height="3.2" fill="#d9cbc8"/><rect x="3.2" y="0.0" width="3.3" height="3.2" fill="#fafafa"/><rect x="3.2" y="3.1" width="3.3" height="3.2" fill="#e8f2f0"/><rect x="3.2" y="6.2" width="3.3" height="3.2" fill="#eef4f2"/><rect x="6.4" y="0.0" width="3.3" height="3.2" fill="#d4d2d0"/><rect x="6.4" y="3.1" width="3.3" height="3.2" fill="#e2dcd0"/><rect x="6.4" y="6.2" width="3.3" height="3.2" fill="#c6c6c6"/><rect x="9.6" y="0.0" width="3.3" height="3.2" fill="#e6ecec"/><rect x="9.6" y="3.1" width="3.3" height="3.2" fill="#c4c8d6"/><rect x="9.6" y="6.2" width="3.3" height="3.2" fill="#c8cad6"/><rect x="12.8" y="0.0" width="3.3" height="3.2" fill="#d0cccc"/><rect x="12.8" y="3.1" width="3.3" height="3.2" fill="#d6c4c4"/><rect x="12.8" y="6.2" width="3.3" height="3.2" fill="#d0c4c6"/><rect x="16.0" y="0.0" width="3.3" height="3.2" fill="#f4fafa"/><rect x="16.0" y="3.1" width="3.3" height="3.2" fill="#eeeee0"/><rect x="16.0" y="6.2" width="3.3" height="3.2" fill="#e6ece6"/><rect x="19.2" y="0.0" width="3.3" height="3.2" fill="#dad0ca"/><rect x="19.2" y="3.1" width="3.3" height="3.2" fill="#b8bcc0"/><rect x="19.2" y="6.2" width="3.3" height="3.2" fill="#bebebe"/><rect x="22.4" y="0.0" width="3.3" height="3.2" fill="#f2f2fa"/><rect x="22.4" y="3.1" width="3.3" height="3.2" fill="#d4d8e4"/><rect x="22.4" y="6.2" width="3.3" height="3.2" fill="#ccd0dc"/></svg>
<div class="a" style="left:199.0px;top:143.92px;font-size:11.5px;line-height:11.5px;color:#1a1a1a">B</div>
<svg class="a" style="left:205.7px;top:142.3px" width="71" height="13"><rect x="0.00" y="0.0" width="3.2" height="3.3" fill="rgb(226,233,231)"/><rect x="0.00" y="3.2" width="3.2" height="3.3" fill="rgb(189,188,191)"/><rect x="0.00" y="6.4" width="3.2" height="3.3" fill="rgb(193,189,187)"/><rect x="0.00" y="9.6" width="3.2" height="3.3" fill="rgb(222,227,223)"/><rect x="3.08" y="0.0" width="3.2" height="3.3" fill="rgb(230,232,228)"/><rect x="3.08" y="3.2" width="3.2" height="3.3" fill="rgb(203,203,209)"/><rect x="3.08" y="6.4" width="3.2" height="3.3" fill="rgb(210,206,215)"/><rect x="3.08" y="9.6" width="3.2" height="3.3" fill="rgb(228,229,236)"/><rect x="6.16" y="0.0" width="3.2" height="3.3" fill="rgb(242,239,249)"/><rect x="6.16" y="3.2" width="3.2" height="3.3" fill="rgb(212,204,208)"/><rect x="6.16" y="6.4" width="3.2" height="3.3" fill="rgb(215,213,214)"/><rect x="6.16" y="9.6" width="3.2" height="3.3" fill="rgb(222,216,222)"/><rect x="9.24" y="0.0" width="3.2" height="3.3" fill="rgb(216,209,216)"/><rect x="9.24" y="3.2" width="3.2" height="3.3" fill="rgb(199,199,201)"/><rect x="9.24" y="6.4" width="3.2" height="3.3" fill="rgb(174,176,177)"/><rect x="9.24" y="9.6" width="3.2" height="3.3" fill="rgb(219,220,228)"/><rect x="12.32" y="0.0" width="3.2" height="3.3" fill="rgb(233,236,238)"/><rect x="12.32" y="3.2" width="3.2" height="3.3" fill="rgb(221,210,220)"/><rect x="12.32" y="6.4" width="3.2" height="3.3" fill="rgb(203,205,201)"/><rect x="12.32" y="9.6" width="3.2" height="3.3" fill="rgb(234,231,236)"/><rect x="15.40" y="0.0" width="3.2" height="3.3" fill="rgb(242,240,248)"/><rect x="15.40" y="3.2" width="3.2" height="3.3" fill="rgb(238,231,234)"/><rect x="15.40" y="6.4" width="3.2" height="3.3" fill="rgb(240,235,243)"/><rect x="15.40" y="9.6" width="3.2" height="3.3" fill="rgb(249,244,247)"/><rect x="18.48" y="0.0" width="3.2" height="3.3" fill="rgb(250,247,256)"/><rect x="18.48" y="3.2" width="3.2" height="3.3" fill="rgb(236,243,242)"/><rect x="18.48" y="6.4" width="3.2" height="3.3" fill="rgb(240,244,235)"/><rect x="18.48" y="9.6" width="3.2" height="3.3" fill="rgb(247,244,242)"/><rect x="21.56" y="0.0" width="3.2" height="3.3" fill="rgb(236,232,229)"/><rect x="21.56" y="3.2" width="3.2" height="3.3" fill="rgb(207,210,210)"/><rect x="21.56" y="6.4" width="3.2" height="3.3" fill="rgb(188,187,188)"/><rect x="21.56" y="9.6" width="3.2" height="3.3" fill="rgb(233,234,241)"/><rect x="24.64" y="0.0" width="3.2" height="3.3" fill="rgb(253,255,254)"/><rect x="24.64" y="3.2" width="3.2" height="3.3" fill="rgb(245,247,246)"/><rect x="24.64" y="6.4" width="3.2" height="3.3" fill="rgb(226,224,225)"/><rect x="24.64" y="9.6" width="3.2" height="3.3" fill="rgb(250,245,244)"/><rect x="27.72" y="0.0" width="3.2" height="3.3" fill="rgb(249,255,252)"/><rect x="27.72" y="3.2" width="3.2" height="3.3" fill="rgb(228,233,230)"/><rect x="27.72" y="6.4" width="3.2" height="3.3" fill="rgb(167,156,167)"/><rect x="27.72" y="9.6" width="3.2" height="3.3" fill="rgb(244,247,255)"/><rect x="30.80" y="0.0" width="3.2" height="3.3" fill="rgb(253,244,253)"/><rect x="30.80" y="3.2" width="3.2" height="3.3" fill="rgb(244,248,243)"/><rect x="30.80" y="6.4" width="3.2" height="3.3" fill="rgb(241,240,245)"/><rect x="30.80" y="9.6" width="3.2" height="3.3" fill="rgb(243,234,247)"/><rect x="33.88" y="0.0" width="3.2" height="3.3" fill="rgb(245,255,249)"/><rect x="33.88" y="3.2" width="3.2" height="3.3" fill="rgb(232,226,237)"/><rect x="33.88" y="6.4" width="3.2" height="3.3" fill="rgb(239,239,241)"/><rect x="33.88" y="9.6" width="3.2" height="3.3" fill="rgb(248,245,246)"/><rect x="36.96" y="0.0" width="3.2" height="3.3" fill="rgb(245,245,248)"/><rect x="36.96" y="3.2" width="3.2" height="3.3" fill="rgb(197,191,192)"/><rect x="36.96" y="6.4" width="3.2" height="3.3" fill="rgb(215,210,210)"/><rect x="36.96" y="9.6" width="3.2" height="3.3" fill="rgb(236,227,235)"/><rect x="40.04" y="0.0" width="3.2" height="3.3" fill="rgb(230,240,239)"/><rect x="40.04" y="3.2" width="3.2" height="3.3" fill="rgb(211,207,215)"/><rect x="40.04" y="6.4" width="3.2" height="3.3" fill="rgb(164,156,169)"/><rect x="40.04" y="9.6" width="3.2" height="3.3" fill="rgb(228,234,232)"/><rect x="43.12" y="0.0" width="3.2" height="3.3" fill="rgb(243,235,239)"/><rect x="43.12" y="3.2" width="3.2" height="3.3" fill="rgb(233,227,232)"/><rect x="43.12" y="6.4" width="3.2" height="3.3" fill="rgb(226,226,222)"/><rect x="43.12" y="9.6" width="3.2" height="3.3" fill="rgb(246,241,253)"/><rect x="46.20" y="0.0" width="3.2" height="3.3" fill="rgb(231,230,229)"/><rect x="46.20" y="3.2" width="3.2" height="3.3" fill="rgb(216,219,216)"/><rect x="46.20" y="6.4" width="3.2" height="3.3" fill="rgb(198,208,210)"/><rect x="46.20" y="9.6" width="3.2" height="3.3" fill="rgb(244,244,239)"/><rect x="49.28" y="0.0" width="3.2" height="3.3" fill="rgb(233,238,241)"/><rect x="49.28" y="3.2" width="3.2" height="3.3" fill="rgb(180,186,185)"/><rect x="49.28" y="6.4" width="3.2" height="3.3" fill="rgb(179,179,181)"/><rect x="49.28" y="9.6" width="3.2" height="3.3" fill="rgb(216,218,227)"/><rect x="52.36" y="0.0" width="3.2" height="3.3" fill="rgb(233,230,237)"/><rect x="52.36" y="3.2" width="3.2" height="3.3" fill="rgb(167,158,168)"/><rect x="52.36" y="6.4" width="3.2" height="3.3" fill="rgb(203,213,213)"/><rect x="52.36" y="9.6" width="3.2" height="3.3" fill="rgb(233,230,229)"/><rect x="55.44" y="0.0" width="3.2" height="3.3" fill="rgb(238,232,239)"/><rect x="55.44" y="3.2" width="3.2" height="3.3" fill="rgb(178,173,176)"/><rect x="55.44" y="6.4" width="3.2" height="3.3" fill="rgb(178,184,187)"/><rect x="55.44" y="9.6" width="3.2" height="3.3" fill="rgb(225,231,225)"/><rect x="58.52" y="0.0" width="3.2" height="3.3" fill="rgb(249,243,253)"/><rect x="58.52" y="3.2" width="3.2" height="3.3" fill="rgb(240,249,250)"/><rect x="58.52" y="6.4" width="3.2" height="3.3" fill="rgb(233,233,237)"/><rect x="58.52" y="9.6" width="3.2" height="3.3" fill="rgb(241,236,241)"/><rect x="61.60" y="0.0" width="3.2" height="3.3" fill="rgb(255,254,255)"/><rect x="61.60" y="3.2" width="3.2" height="3.3" fill="rgb(254,245,246)"/><rect x="61.60" y="6.4" width="3.2" height="3.3" fill="rgb(248,241,243)"/><rect x="61.60" y="9.6" width="3.2" height="3.3" fill="rgb(252,255,249)"/><rect x="64.68" y="0.0" width="3.2" height="3.3" fill="rgb(229,229,225)"/><rect x="64.68" y="3.2" width="3.2" height="3.3" fill="rgb(177,177,184)"/><rect x="64.68" y="6.4" width="3.2" height="3.3" fill="rgb(180,186,192)"/><rect x="64.68" y="9.6" width="3.2" height="3.3" fill="rgb(217,218,214)"/><rect x="67.76" y="0.0" width="3.2" height="3.3" fill="rgb(228,218,220)"/><rect x="67.76" y="3.2" width="3.2" height="3.3" fill="rgb(210,210,207)"/><rect x="67.76" y="6.4" width="3.2" height="3.3" fill="rgb(182,183,194)"/><rect x="67.76" y="9.6" width="3.2" height="3.3" fill="rgb(221,221,218)"/></svg>
<div class="a" style="left:357.5px;top:144.00px;font-size:11.4px;line-height:11.4px;color:#2472cc">71878402961</div>
<div class="a" style="left:452.1px;top:143.92px;font-size:11.5px;line-height:11.5px;color:#1a1a1a">4m ago</div>
<div class="a" style="left:605.9px;top:144.08px;font-size:11.3px;line-height:11.3px;color:#1a1a1a">Flea 4+</div>
<div class="a" style="left:799.1px;top:144.08px;font-size:11.3px;line-height:11.3px;color:#1a1a1a">1.8 GB</div>
<div class="a" style="left:953.8px;top:144.25px;font-size:11.1px;line-height:11.1px;color:#1a1a1a">stable 24.22.01</div>
<svg class="a" style="left:1096.8px;top:140.2px" width="16" height="15" viewBox="0 0 16 15"><path d="M8 1 C8.5 1 8.8 1.2 9 1.6 L15 12.6 C15.3 13.3 14.9 14 14.2 14 H1.8 C1.1 14 0.7 13.3 1 12.6 L7 1.6 C7.2 1.2 7.5 1 8 1Z" fill="#f5b000"/><path d="M8 5 V9.4" stroke="#fff" stroke-width="1.6"/><circle cx="8" cy="11.6" r="0.9" fill="#fff"/></svg>
<div class="a" style="left:0;top:162.9px;width:1282.8px;height:27.15px;background:#f9f9f9;border-top:1px solid #dcdcdc"></div>
<div class="a" style="left:19.0px;top:171.07px;font-size:11.5px;line-height:11.5px;color:#1a1a1a">x</div>
<svg class="a" style="left:25.4px;top:170.8px" width="26" height="10"><rect x="0.0" y="0.0" width="3.3" height="3.2" fill="#d0cccc"/><rect x="0.0" y="3.1" width="3.3" height="3.2" fill="#dfc9c3"/><rect x="0.0" y="6.2" width="3.3" height="3.2" fill="#d9cbc8"/><rect x="3.2" y="0.0" width="3.3" height="3.2" fill="#fafafa"/><rect x="3.2" y="3.1" width="3.3" height="3.2" fill="#e8f2f0"/><rect x="3.2" y="6.2" width="3.3" height="3.2" fill="#eef4f2"/><rect x="6.4" y="0.0" width="3.3" height="3.2" fill="#d4d2d0"/><rect x="6.4" y="3.1" width="3.3" height="3.2" fill="#e2dcd0"/><rect x="6.4" y="6.2" width="3.3" height="3.2" fill="#c6c6c6"/><rect x="9.6" y="0.0" width="3.3" height="3.2" fill="#e6ecec"/><rect x="9.6" y="3.1" width="3.3" height="3.2" fill="#c4c8d6"/><rect x="9.6" y="6.2" width="3.3" height="3.2" fill="#c8cad6"/><rect x="12.8" y="0.0" width="3.3" height="3.2" fill="#d0cccc"/><rect x="12.8" y="3.1" width="3.3" height="3.2" fill="#d6c4c4"/><rect x="12.8" y="6.2" width="3.3" height="3.2" fill="#d0c4c6"/><rect x="16.0" y="0.0" width="3.3" height="3.2" fill="#f4fafa"/><rect x="16.0" y="3.1" width="3.3" height="3.2" fill="#eeeee0"/><rect x="16.0" y="6.2" width="3.3" height="3.2" fill="#e6ece6"/><rect x="19.2" y="0.0" width="3.3" height="3.2" fill="#dad0ca"/><rect x="19.2" y="3.1" width="3.3" height="3.2" fill="#b8bcc0"/><rect x="19.2" y="6.2" width="3.3" height="3.2" fill="#bebebe"/><rect x="22.4" y="0.0" width="3.3" height="3.2" fill="#f2f2fa"/><rect x="22.4" y="3.1" width="3.3" height="3.2" fill="#d4d8e4"/><rect x="22.4" y="6.2" width="3.3" height="3.2" fill="#ccd0dc"/></svg>
<div class="a" style="left:199.0px;top:171.07px;font-size:11.5px;line-height:11.5px;color:#1a1a1a">B</div>
<svg class="a" style="left:205.7px;top:169.5px" width="71" height="13"><rect x="0.00" y="0.0" width="3.2" height="3.3" fill="rgb(233,229,237)"/><rect x="0.00" y="3.2" width="3.2" height="3.3" fill="rgb(219,218,218)"/><rect x="0.00" y="6.4" width="3.2" height="3.3" fill="rgb(192,199,193)"/><rect x="0.00" y="9.6" width="3.2" height="3.3" fill="rgb(220,222,219)"/><rect x="3.08" y="0.0" width="3.2" height="3.3" fill="rgb(233,240,244)"/><rect x="3.08" y="3.2" width="3.2" height="3.3" fill="rgb(253,247,250)"/><rect x="3.08" y="6.4" width="3.2" height="3.3" fill="rgb(236,238,239)"/><rect x="3.08" y="9.6" width="3.2" height="3.3" fill="rgb(240,234,246)"/><rect x="6.16" y="0.0" width="3.2" height="3.3" fill="rgb(233,239,242)"/><rect x="6.16" y="3.2" width="3.2" height="3.3" fill="rgb(219,211,216)"/><rect x="6.16" y="6.4" width="3.2" height="3.3" fill="rgb(225,221,216)"/><rect x="6.16" y="9.6" width="3.2" height="3.3" fill="rgb(226,224,226)"/><rect x="9.24" y="0.0" width="3.2" height="3.3" fill="rgb(248,253,245)"/><rect x="9.24" y="3.2" width="3.2" height="3.3" fill="rgb(207,205,204)"/><rect x="9.24" y="6.4" width="3.2" height="3.3" fill="rgb(222,226,220)"/><rect x="9.24" y="9.6" width="3.2" height="3.3" fill="rgb(249,245,250)"/><rect x="12.32" y="0.0" width="3.2" height="3.3" fill="rgb(239,229,232)"/><rect x="12.32" y="3.2" width="3.2" height="3.3" fill="rgb(213,220,223)"/><rect x="12.32" y="6.4" width="3.2" height="3.3" fill="rgb(215,221,217)"/><rect x="12.32" y="9.6" width="3.2" height="3.3" fill="rgb(242,244,236)"/><rect x="15.40" y="0.0" width="3.2" height="3.3" fill="rgb(254,246,257)"/><rect x="15.40" y="3.2" width="3.2" height="3.3" fill="rgb(248,248,249)"/><rect x="15.40" y="6.4" width="3.2" height="3.3" fill="rgb(239,236,237)"/><rect x="15.40" y="9.6" width="3.2" height="3.3" fill="rgb(246,246,246)"/><rect x="18.48" y="0.0" width="3.2" height="3.3" fill="rgb(227,229,232)"/><rect x="18.48" y="3.2" width="3.2" height="3.3" fill="rgb(197,193,198)"/><rect x="18.48" y="6.4" width="3.2" height="3.3" fill="rgb(188,190,194)"/><rect x="18.48" y="9.6" width="3.2" height="3.3" fill="rgb(238,245,239)"/><rect x="21.56" y="0.0" width="3.2" height="3.3" fill="rgb(241,240,241)"/><rect x="21.56" y="3.2" width="3.2" height="3.3" fill="rgb(193,187,196)"/><rect x="21.56" y="6.4" width="3.2" height="3.3" fill="rgb(198,201,200)"/><rect x="21.56" y="9.6" width="3.2" height="3.3" fill="rgb(217,224,224)"/><rect x="24.64" y="0.0" width="3.2" height="3.3" fill="rgb(233,237,233)"/><rect x="24.64" y="3.2" width="3.2" height="3.3" fill="rgb(217,217,224)"/><rect x="24.64" y="6.4" width="3.2" height="3.3" fill="rgb(211,218,218)"/><rect x="24.64" y="9.6" width="3.2" height="3.3" fill="rgb(237,242,243)"/><rect x="27.72" y="0.0" width="3.2" height="3.3" fill="rgb(220,230,228)"/><rect x="27.72" y="3.2" width="3.2" height="3.3" fill="rgb(188,183,181)"/><rect x="27.72" y="6.4" width="3.2" height="3.3" fill="rgb(172,169,175)"/><rect x="27.72" y="9.6" width="3.2" height="3.3" fill="rgb(212,212,224)"/><rect x="30.80" y="0.0" width="3.2" height="3.3" fill="rgb(221,221,229)"/><rect x="30.80" y="3.2" width="3.2" height="3.3" fill="rgb(156,166,165)"/><rect x="30.80" y="6.4" width="3.2" height="3.3" fill="rgb(179,175,177)"/><rect x="30.80" y="9.6" width="3.2" height="3.3" fill="rgb(235,234,232)"/><rect x="33.88" y="0.0" width="3.2" height="3.3" fill="rgb(255,250,252)"/><rect x="33.88" y="3.2" width="3.2" height="3.3" fill="rgb(237,234,233)"/><rect x="33.88" y="6.4" width="3.2" height="3.3" fill="rgb(239,233,239)"/><rect x="33.88" y="9.6" width="3.2" height="3.3" fill="rgb(241,233,244)"/><rect x="36.96" y="0.0" width="3.2" height="3.3" fill="rgb(238,232,234)"/><rect x="36.96" y="3.2" width="3.2" height="3.3" fill="rgb(193,196,188)"/><rect x="36.96" y="6.4" width="3.2" height="3.3" fill="rgb(208,201,200)"/><rect x="36.96" y="9.6" width="3.2" height="3.3" fill="rgb(238,239,237)"/><rect x="40.04" y="0.0" width="3.2" height="3.3" fill="rgb(239,235,241)"/><rect x="40.04" y="3.2" width="3.2" height="3.3" fill="rgb(246,246,243)"/><rect x="40.04" y="6.4" width="3.2" height="3.3" fill="rgb(250,246,255)"/><rect x="40.04" y="9.6" width="3.2" height="3.3" fill="rgb(249,244,252)"/><rect x="43.12" y="0.0" width="3.2" height="3.3" fill="rgb(221,217,218)"/><rect x="43.12" y="3.2" width="3.2" height="3.3" fill="rgb(181,173,186)"/><rect x="43.12" y="6.4" width="3.2" height="3.3" fill="rgb(161,165,166)"/><rect x="43.12" y="9.6" width="3.2" height="3.3" fill="rgb(230,230,223)"/><rect x="46.20" y="0.0" width="3.2" height="3.3" fill="rgb(226,234,227)"/><rect x="46.20" y="3.2" width="3.2" height="3.3" fill="rgb(218,218,225)"/><rect x="46.20" y="6.4" width="3.2" height="3.3" fill="rgb(201,202,210)"/><rect x="46.20" y="9.6" width="3.2" height="3.3" fill="rgb(240,244,236)"/><rect x="49.28" y="0.0" width="3.2" height="3.3" fill="rgb(229,228,231)"/><rect x="49.28" y="3.2" width="3.2" height="3.3" fill="rgb(190,191,188)"/><rect x="49.28" y="6.4" width="3.2" height="3.3" fill="rgb(174,182,180)"/><rect x="49.28" y="9.6" width="3.2" height="3.3" fill="rgb(238,229,231)"/><rect x="52.36" y="0.0" width="3.2" height="3.3" fill="rgb(248,243,250)"/><rect x="52.36" y="3.2" width="3.2" height="3.3" fill="rgb(217,215,224)"/><rect x="52.36" y="6.4" width="3.2" height="3.3" fill="rgb(226,222,223)"/><rect x="52.36" y="9.6" width="3.2" height="3.3" fill="rgb(245,250,255)"/><rect x="55.44" y="0.0" width="3.2" height="3.3" fill="rgb(230,226,235)"/><rect x="55.44" y="3.2" width="3.2" height="3.3" fill="rgb(179,179,174)"/><rect x="55.44" y="6.4" width="3.2" height="3.3" fill="rgb(179,190,191)"/><rect x="55.44" y="9.6" width="3.2" height="3.3" fill="rgb(231,236,240)"/><rect x="58.52" y="0.0" width="3.2" height="3.3" fill="rgb(238,238,245)"/><rect x="58.52" y="3.2" width="3.2" height="3.3" fill="rgb(252,248,257)"/><rect x="58.52" y="6.4" width="3.2" height="3.3" fill="rgb(231,235,231)"/><rect x="58.52" y="9.6" width="3.2" height="3.3" fill="rgb(252,249,247)"/><rect x="61.60" y="0.0" width="3.2" height="3.3" fill="rgb(250,244,245)"/><rect x="61.60" y="3.2" width="3.2" height="3.3" fill="rgb(201,197,203)"/><rect x="61.60" y="6.4" width="3.2" height="3.3" fill="rgb(222,223,221)"/><rect x="61.60" y="9.6" width="3.2" height="3.3" fill="rgb(229,228,230)"/><rect x="64.68" y="0.0" width="3.2" height="3.3" fill="rgb(228,228,231)"/><rect x="64.68" y="3.2" width="3.2" height="3.3" fill="rgb(212,211,213)"/><rect x="64.68" y="6.4" width="3.2" height="3.3" fill="rgb(204,198,203)"/><rect x="64.68" y="9.6" width="3.2" height="3.3" fill="rgb(236,240,243)"/><rect x="67.76" y="0.0" width="3.2" height="3.3" fill="rgb(228,234,230)"/><rect x="67.76" y="3.2" width="3.2" height="3.3" fill="rgb(157,158,162)"/><rect x="67.76" y="6.4" width="3.2" height="3.3" fill="rgb(198,201,199)"/><rect x="67.76" y="9.6" width="3.2" height="3.3" fill="rgb(246,251,253)"/></svg>
<div class="a" style="left:357.5px;top:171.15px;font-size:11.4px;line-height:11.4px;color:#2472cc">71878402000</div>
<div class="a" style="left:452.1px;top:171.07px;font-size:11.5px;line-height:11.5px;color:#1a1a1a">5m ago</div>
<div class="a" style="left:605.9px;top:171.23px;font-size:11.3px;line-height:11.3px;color:#1a1a1a">Flea 4+</div>
<div class="a" style="left:799.1px;top:171.23px;font-size:11.3px;line-height:11.3px;color:#1a1a1a">1.8 GB</div>
<div class="a" style="left:953.8px;top:171.40px;font-size:11.1px;line-height:11.1px;color:#1a1a1a">stable 24.22.01</div>
<svg class="a" style="left:1096.8px;top:167.4px" width="16" height="15" viewBox="0 0 16 15"><path d="M8 1 C8.5 1 8.8 1.2 9 1.6 L15 12.6 C15.3 13.3 14.9 14 14.2 14 H1.8 C1.1 14 0.7 13.3 1 12.6 L7 1.6 C7.2 1.2 7.5 1 8 1Z" fill="#f5b000"/><path d="M8 5 V9.4" stroke="#fff" stroke-width="1.6"/><circle cx="8" cy="11.6" r="0.9" fill="#fff"/></svg>
</div>
</body></html>
